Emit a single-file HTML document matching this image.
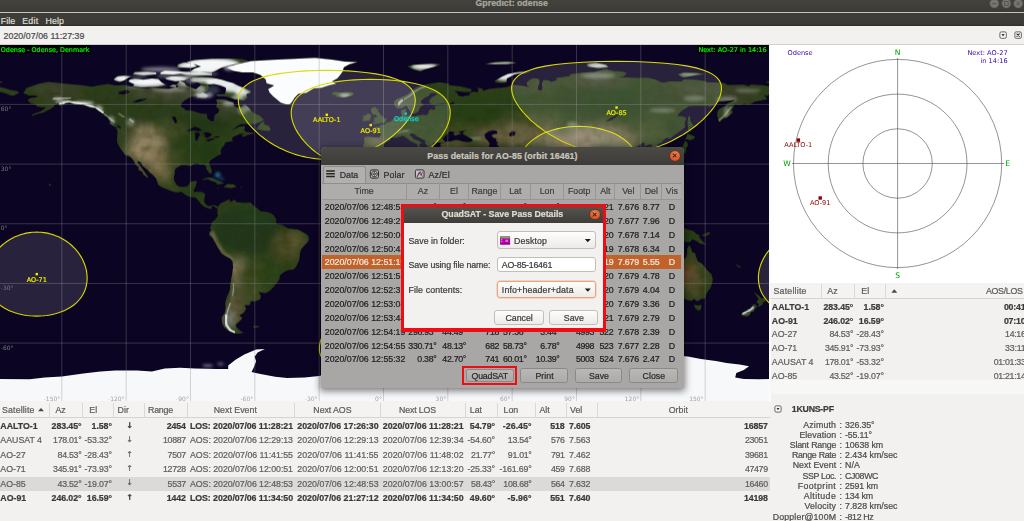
<!DOCTYPE html>
<html lang="en"><head><meta charset="utf-8"><title>Gpredict: odense</title>
<style>
html,body{margin:0;padding:0}
body{width:1024px;height:521px;overflow:hidden;position:relative;background:#f2f1f0;font-family:"Liberation Sans",sans-serif;font-size:8.8px;color:#3c3c3c}
.abs{position:absolute}
.t{position:absolute;white-space:pre;line-height:12px;height:12px;-webkit-text-stroke:0.22px currentColor}
#titlebar{position:absolute;left:0;top:0;width:1024px;height:12px;background:linear-gradient(#43423d,#3c3b37)}
#titleline{position:absolute;left:0;top:12px;width:1024px;height:1px;background:#c4c3bf}
.wbtn{position:absolute;width:9.2px;height:9.2px;border-radius:50%;background:#77766f;box-shadow:inset 0 0 0 0.7px #5d5c56}
#menubar{position:absolute;left:0;top:13px;width:1024px;height:13px;background:linear-gradient(#3e3d39 0,#3c3b37 85%,#2e2d2a 100%)}
#toolbar{position:absolute;left:0;top:26px;width:1024px;height:18.5px;background:#f2f1f0;border-bottom:0.6px solid #d2d0cc;box-sizing:border-box}
#polarbg{position:absolute;left:770.5px;top:44.5px;width:253.5px;height:238.5px;background:#fff}
#mapedge{position:absolute;left:769px;top:44.5px;width:1.5px;height:357px;background:#fbfbfa}
#rlist_hdr{position:absolute;left:770px;top:283px;width:254px;height:16.3px;background:#f4f3f2;border-bottom:0.8px solid #d6d4d0;box-sizing:border-box}
#rlist_foot{position:absolute;left:770px;top:379.5px;width:254px;height:14px;background:#f7f7f6}
.vsep{position:absolute;width:0.8px;background:#dad8d4}
.vsep2{position:absolute;width:0.8px;background:#979695}
.tri_up{position:absolute;width:0;height:0;border-left:2.7px solid transparent;border-right:2.7px solid transparent;border-bottom:3.2px solid #4c4c4c}
.tri_dn{position:absolute;width:0;height:0;border-left:2.7px solid transparent;border-right:2.7px solid transparent;border-top:3.2px solid #222}
#bt_hdr{position:absolute;left:0;top:401.3px;width:770px;height:17px;background:#f4f3f2;border-bottom:0.8px solid #d6d4d0;box-sizing:border-box}
#bt_sel{position:absolute;left:0;top:476.6px;width:770px;height:14px;background:#dcdad8}
#pw{position:absolute;left:321px;top:147.1px;width:362.6px;height:240.8px;background:#a8a7a6;border-radius:5px 5px 0 0;box-shadow:0 2px 7px 0.5px rgba(0,0,0,0.5)}
#pw_title{position:absolute;left:321px;top:147.1px;width:362.6px;height:17.6px;background:linear-gradient(#4a4944,#3d3c38);border-radius:5px 5px 0 0}
#pw_tab{position:absolute;left:322.5px;top:166px;width:43.5px;height:16.5px;background:#b1b0af;border:0.7px solid #8e8d8c;border-bottom:none;border-radius:2.5px 2.5px 0 0;box-sizing:border-box}
#pw_hdr{position:absolute;left:322.3px;top:182.5px;width:359px;height:17px;background:#aeadac;border-top:0.7px solid #8e8d8c;border-bottom:0.7px solid #979695;box-sizing:border-box}
#pw_sel{position:absolute;left:322.3px;top:255.3px;width:359px;height:13.9px;background:#c0622a}
.closebtn{position:absolute;border-radius:50%;background:radial-gradient(circle at 50% 35%,#f08a60,#d9501e 75%);box-shadow:0 0 0 0.6px #6e2a10}
.closebtn:before,.closebtn:after{content:"";position:absolute;left:50%;top:50%;width:5.4px;height:1px;margin:-0.5px 0 0 -2.7px;background:#4a1c0a;transform:rotate(45deg)}
.closebtn:after{transform:rotate(-45deg)}
.pbtn{position:absolute;background:linear-gradient(#b9b8b7,#acabaa);border:0.8px solid #8a8988;border-radius:2.5px;box-sizing:border-box}
#qs_red{position:absolute;left:462.3px;top:366.3px;width:54.7px;height:18.9px;border:2.9px solid #ee0d12;box-sizing:border-box}
#sd_red{position:absolute;left:400.5px;top:203.8px;width:205.3px;height:127.9px;background:#ee0d12}
#sd_title{position:absolute;left:403.5px;top:206.8px;width:199.3px;height:16px;background:linear-gradient(#55534e,#3e3d39)}
#sd_body{position:absolute;left:403.5px;top:222.8px;width:199.3px;height:105.6px;background:#f2f1f0}
.combo,.sbtn{position:absolute;background:linear-gradient(#fdfdfc,#ecebe9);border:0.9px solid #c2bfb9;border-radius:3px;box-sizing:border-box}
.combo.foc{border-color:#e9a57e;box-shadow:0 0 0 0.4px #f0b696}
.entry{position:absolute;background:#fff;border:0.9px solid #c2bfb9;border-radius:3px;box-sizing:border-box}

svg text{font-family:"DejaVu Sans","Liberation Sans",sans-serif}
</style></head>
<body>
<div id="titlebar"></div>
<span class="t" style="letter-spacing:-0.004px;left:475.50px;top:-2.80px;font-weight:bold;color:#aaa79f">Gpredict: odense</span>
<svg class="abs" style="left:985px;top:0" width="39" height="11" viewBox="985 0 39 11"><circle cx="994.3" cy="3.5" r="4.5" fill="#76756f" stroke="#5a5954" stroke-width="0.6"/><circle cx="1006.3" cy="3.5" r="4.5" fill="#76756f" stroke="#5a5954" stroke-width="0.6"/><circle cx="1018.2" cy="3.5" r="4.5" fill="#76756f" stroke="#5a5954" stroke-width="0.6"/><path d="M992.2 3.7H996.4" stroke="#55544f" stroke-width="1"/><rect x="1004.4" y="1.6" width="3.8" height="3.8" fill="none" stroke="#55544f" stroke-width="0.9"/><path d="M1016.4 1.7L1020 5.3M1020 1.7L1016.4 5.3" stroke="#55544f" stroke-width="1"/></svg>
<div id="titleline"></div>
<div id="menubar"></div>
<span class="t" style="letter-spacing:0.080px;left:0.70px;top:14.80px;color:#dfdbd2">File</span>
<span class="t" style="letter-spacing:0.284px;left:22.20px;top:14.80px;color:#dfdbd2">Edit</span>
<span class="t" style="letter-spacing:0.100px;left:45.60px;top:14.80px;color:#dfdbd2">Help</span>
<div id="toolbar"></div>
<span class="t" style="letter-spacing:0.048px;left:3.50px;top:29.50px;color:#4a4a4a">2020/07/06 11:27:39</span>
<svg class="abs" style="left:999px;top:31px" width="24" height="9" viewBox="0 0 24 9"><rect x="0.9" y="0.9" width="6.4" height="6.4" rx="1.4" fill="#fafafa" stroke="#555" stroke-width="0.9"/><path d="M2.5 3.1 L5.7 3.1 L4.1 5.4 Z" fill="#333"/><rect x="15.9" y="0.9" width="6.4" height="6.4" rx="1.2" fill="#fafafa" stroke="#555" stroke-width="0.9"/><path d="M17.6 2.6 L20.6 5.6 M20.6 2.6 L17.6 5.6" stroke="#222" stroke-width="1.1"/></svg>
<svg class="abs" id="map" style="left:0;top:44.5px" width="769" height="356.8" viewBox="0 44.5 769 356.8">
<defs>
<clipPath id="landclip"><path d="M23.2 92.8 L26.5 87.4 L34.0 85.0 L38.3 83.4 L47.9 81.4 L57.6 82.4 L66.1 83.4 L81.1 84.8 L91.9 86.2 L98.3 85.0 L107.9 83.6 L115.4 85.0 L124.0 84.6 L136.9 87.6 L147.6 88.4 L151.9 87.4 L160.5 88.0 L169.1 88.4 L175.5 87.0 L177.6 83.0 L179.8 80.4 L184.1 82.0 L186.2 85.0 L190.5 86.8 L195.9 89.0 L199.1 86.0 L201.2 84.6 L207.7 85.0 L209.2 87.0 L207.7 90.0 L203.4 91.4 L199.1 92.0 L195.9 95.0 L190.5 96.4 L185.1 99.3 L181.9 102.3 L180.4 105.9 L184.1 108.3 L185.6 109.9 L192.6 110.5 L196.9 112.1 L201.2 113.3 L207.0 113.7 L207.2 117.8 L209.8 120.2 L211.9 121.4 L214.1 120.6 L214.7 114.9 L218.4 112.3 L219.5 108.9 L216.2 105.9 L217.3 102.9 L216.2 99.3 L221.6 99.3 L225.9 99.5 L230.2 101.3 L233.4 101.9 L234.5 105.9 L237.7 107.3 L242.0 106.3 L244.1 103.3 L246.3 104.9 L249.5 107.9 L251.6 110.9 L254.8 113.3 L259.1 114.7 L261.3 116.8 L263.8 119.2 L261.3 121.0 L254.8 123.4 L248.4 123.4 L240.9 123.4 L236.6 126.0 L232.3 129.4 L235.5 128.0 L239.8 126.0 L245.2 125.6 L244.5 128.2 L244.1 129.8 L246.3 131.4 L251.6 132.2 L254.8 131.4 L252.7 133.2 L247.3 134.5 L243.0 136.5 L241.5 135.1 L245.2 133.2 L239.8 133.6 L235.5 135.3 L232.7 136.7 L231.7 138.7 L233.4 139.9 L232.3 140.5 L230.2 140.9 L225.9 141.7 L224.8 142.7 L224.4 144.7 L222.2 146.7 L220.5 149.7 L220.5 151.6 L221.4 153.0 L218.8 154.4 L216.2 155.8 L213.4 157.6 L209.8 160.0 L208.9 163.0 L210.7 166.8 L211.7 169.9 L211.3 172.9 L209.4 173.1 L207.7 170.5 L206.2 168.0 L205.9 165.4 L203.4 163.6 L200.4 164.2 L198.0 162.8 L194.4 163.0 L191.8 165.2 L189.4 165.2 L186.2 164.4 L181.9 164.4 L178.7 166.0 L175.1 168.6 L174.8 171.9 L173.8 176.5 L174.2 180.5 L176.8 184.9 L179.8 186.5 L183.0 186.7 L186.6 186.3 L189.2 183.9 L189.9 181.5 L193.7 180.5 L196.9 180.5 L195.9 184.5 L195.2 187.1 L194.1 188.4 L193.1 191.6 L195.9 191.8 L199.1 191.6 L202.3 191.8 L205.1 193.4 L204.4 197.4 L204.0 201.4 L205.5 203.4 L207.2 205.2 L209.8 205.7 L211.9 205.0 L214.1 204.4 L216.7 205.7 L217.7 206.3 L217.1 208.3 L215.6 206.9 L213.2 205.3 L211.3 206.7 L211.3 208.5 L208.7 208.1 L205.9 206.9 L204.2 206.1 L201.2 203.8 L199.5 201.4 L196.9 198.2 L195.2 196.8 L191.6 196.4 L187.7 195.4 L184.5 193.4 L181.5 191.0 L178.1 191.8 L174.4 191.6 L170.1 190.0 L165.8 188.2 L161.6 186.5 L158.3 184.3 L157.3 181.5 L156.2 177.9 L153.0 174.5 L149.8 171.9 L148.0 169.5 L145.5 167.6 L142.7 165.6 L141.2 162.0 L137.8 160.2 L137.5 162.6 L140.8 166.2 L143.3 169.9 L145.9 173.5 L148.5 177.1 L147.0 177.1 L143.3 173.9 L142.3 171.1 L138.4 169.2 L138.6 166.6 L135.4 164.0 L133.7 160.6 L132.2 158.2 L129.6 155.8 L125.1 154.6 L123.0 151.6 L121.2 149.3 L119.7 146.7 L117.6 143.3 L117.0 139.7 L117.2 135.7 L117.6 131.4 L116.1 127.2 L119.7 127.4 L121.0 129.0 L120.6 126.2 L119.3 125.2 L115.9 123.8 L111.2 122.2 L109.4 119.8 L107.3 116.8 L104.1 114.9 L101.5 112.3 L98.3 109.9 L95.1 107.3 L90.8 107.3 L87.6 105.9 L83.7 104.3 L79.0 103.9 L74.7 103.7 L69.8 102.1 L65.5 102.5 L64.0 103.9 L59.7 105.1 L58.2 102.7 L61.8 101.5 L57.6 102.3 L54.3 104.9 L52.8 106.9 L50.0 108.5 L46.8 110.3 L43.6 111.9 L39.3 112.9 L34.0 114.5 L30.7 114.9 L35.0 112.7 L39.3 111.5 L43.6 108.9 L46.2 106.5 L42.5 106.7 L37.2 105.9 L35.7 103.9 L30.7 102.9 L28.6 100.7 L27.5 99.3 L30.3 97.8 L36.1 97.0 L38.3 95.2 L34.0 94.8 L28.6 95.0 L25.4 93.6Z M192.6 76.9 L201.2 76.5 L209.8 76.9 L216.2 78.1 L221.6 79.3 L227.0 81.0 L233.4 82.8 L238.8 85.4 L246.3 88.4 L251.0 90.4 L250.5 92.4 L246.3 93.6 L247.3 97.2 L244.1 99.9 L239.8 99.5 L234.5 98.7 L229.1 96.8 L223.7 95.2 L217.3 95.4 L216.2 94.0 L224.8 93.4 L225.9 90.0 L225.9 87.0 L219.5 84.8 L214.1 83.6 L207.7 84.2 L201.2 83.8 L198.0 82.0 L191.6 81.4 L190.5 79.1Z M132.6 86.0 L141.2 87.0 L151.9 86.6 L158.3 86.0 L165.8 84.4 L161.6 82.0 L158.3 78.5 L151.9 78.1 L143.3 79.3 L134.7 78.1 L130.0 79.3 L128.3 81.0 L134.7 84.0Z M114.4 80.0 L119.7 81.6 L124.0 80.0 L128.3 76.9 L131.5 75.7 L124.0 75.1 L117.6 75.7 L113.9 78.5Z M190.5 71.1 L201.2 71.5 L211.9 71.7 L216.2 70.1 L220.5 67.5 L227.0 65.3 L237.7 62.9 L248.4 60.2 L242.0 58.4 L229.1 58.0 L211.9 58.2 L194.8 59.6 L186.2 61.6 L194.8 63.7 L201.2 66.1 L194.8 68.1Z M186.2 74.5 L199.1 75.1 L211.9 74.9 L211.9 72.7 L199.1 71.5 L186.2 71.5 L177.6 70.5 L179.8 73.1Z M177.6 67.1 L190.5 67.5 L196.9 65.7 L192.6 63.1 L184.1 61.8 L177.6 64.1Z M132.6 73.7 L143.3 75.1 L156.2 74.1 L156.2 72.1 L147.6 71.1 L134.7 71.5Z M166.9 79.1 L175.5 81.0 L184.1 80.0 L190.5 76.5 L179.8 75.9 L171.2 76.1 L164.8 77.5Z M160.5 73.7 L173.3 74.1 L181.9 72.9 L177.6 70.5 L164.8 70.1 L160.5 72.1Z M169.1 86.0 L177.6 87.0 L178.7 85.0 L173.3 84.0Z M196.9 93.0 L203.4 92.0 L208.7 95.4 L205.5 97.4 L196.9 97.0Z M256.3 128.6 L263.4 130.0 L269.8 130.4 L270.5 128.4 L268.8 125.2 L263.8 123.8 L264.5 120.6 L260.6 122.8 L258.1 126.2Z M108.4 122.2 L115.0 123.2 L118.7 126.8 L114.4 126.2Z M201.2 179.9 L205.5 177.5 L209.8 177.1 L214.1 178.3 L218.4 180.1 L224.4 183.1 L216.9 183.9 L216.2 182.1 L210.9 179.9 L207.7 178.7 L204.4 179.3Z M223.7 186.7 L227.0 183.5 L233.4 183.7 L236.8 186.3 L231.2 187.8Z M215.4 186.7 L220.1 187.3 L218.4 187.8Z M239.4 186.5 L242.8 186.7 L240.9 187.6Z M227.0 67.1 L237.7 63.5 L250.5 60.6 L272.0 59.2 L293.4 58.2 L314.9 57.2 L332.0 59.0 L344.9 61.0 L357.8 61.6 L349.2 64.1 L343.8 67.1 L342.8 71.1 L340.6 74.1 L337.4 78.1 L332.0 81.0 L336.3 83.2 L328.8 85.0 L321.3 87.4 L313.8 88.0 L306.3 92.4 L298.2 93.6 L294.5 97.6 L291.7 101.9 L289.6 104.1 L285.9 103.9 L280.6 102.3 L277.4 99.5 L273.1 96.0 L269.4 92.0 L268.1 88.4 L274.1 85.0 L266.6 83.0 L265.6 79.1 L260.2 74.5 L252.7 72.1 L242.0 72.1 L233.4 70.5Z M331.4 93.0 L335.3 91.2 L340.6 92.0 L347.0 91.4 L352.4 91.8 L354.3 94.0 L350.3 95.6 L343.8 97.2 L338.5 96.4 L335.0 96.2 L336.3 94.8 L332.5 94.2Z M217.7 206.3 L221.0 202.4 L223.7 201.4 L228.0 199.6 L230.2 198.8 L229.5 201.8 L232.7 200.4 L233.8 199.0 L237.0 201.8 L242.0 202.2 L245.6 202.4 L250.5 202.0 L253.8 205.7 L257.0 207.7 L260.8 211.3 L265.6 211.5 L270.9 212.9 L273.7 214.9 L276.3 219.7 L275.6 222.9 L279.5 224.4 L281.6 224.6 L288.1 228.2 L293.4 228.8 L297.7 229.0 L302.0 231.2 L305.9 233.4 L308.2 235.2 L308.9 239.2 L307.4 242.1 L304.2 245.1 L300.9 249.1 L299.9 253.1 L299.4 258.7 L297.7 263.0 L295.6 267.0 L293.4 269.0 L288.1 269.4 L283.8 271.4 L279.9 274.6 L279.1 279.3 L276.3 282.9 L273.1 286.9 L269.2 290.7 L265.6 292.5 L261.3 291.9 L258.3 291.1 L260.8 295.4 L260.0 298.8 L255.9 300.4 L250.5 300.8 L249.9 304.4 L244.1 304.8 L246.3 308.0 L243.5 312.4 L239.0 314.7 L242.4 317.7 L238.8 321.3 L235.5 324.3 L236.8 327.5 L240.9 330.7 L243.7 332.2 L238.8 333.4 L233.4 332.6 L229.1 330.7 L224.4 327.1 L222.0 322.7 L221.6 316.7 L224.8 312.8 L225.7 307.8 L225.2 302.8 L226.3 297.8 L228.0 293.9 L230.0 288.9 L230.2 283.9 L231.2 278.9 L232.3 273.0 L233.0 267.0 L232.7 261.0 L230.6 258.3 L225.9 255.7 L221.6 253.1 L219.7 250.1 L217.3 246.1 L214.7 241.2 L212.4 237.2 L209.4 234.8 L209.2 231.8 L211.5 229.8 L210.0 227.6 L211.5 223.8 L211.9 221.7 L214.5 220.1 L216.2 218.1 L218.0 215.5 L217.3 212.1 L217.5 209.3Z M252.7 325.7 L259.1 325.5 L258.1 327.1 L253.1 327.1Z M371.7 151.6 L364.2 149.7 L363.1 146.3 L364.6 141.3 L363.8 137.5 L366.3 136.3 L371.7 136.7 L376.0 136.9 L379.6 136.9 L380.9 134.5 L380.9 131.8 L378.6 129.4 L373.4 127.4 L377.1 126.2 L380.1 126.6 L379.6 124.4 L383.9 124.8 L386.9 122.2 L391.0 121.0 L393.6 117.8 L398.5 116.6 L402.2 116.0 L401.3 112.9 L401.1 109.9 L404.5 108.9 L406.2 108.5 L405.6 111.1 L404.9 113.5 L406.7 115.8 L410.3 115.1 L414.0 116.0 L418.9 114.9 L423.2 114.5 L426.0 115.1 L428.5 113.3 L428.7 110.3 L431.7 108.5 L433.9 109.9 L435.8 107.5 L433.9 105.5 L439.3 104.7 L443.5 104.7 L447.8 103.9 L444.6 102.7 L437.1 103.5 L432.6 104.1 L429.2 102.5 L429.6 98.9 L431.7 97.0 L437.1 94.0 L435.0 92.4 L430.7 92.8 L429.0 95.2 L424.2 97.6 L421.2 99.9 L420.4 102.3 L423.8 104.3 L420.0 106.5 L418.9 109.9 L417.4 111.7 L414.0 113.1 L410.9 112.9 L410.7 110.9 L408.8 108.7 L407.5 106.3 L406.2 104.7 L403.9 106.3 L400.7 107.7 L397.4 107.7 L395.3 106.1 L394.2 103.5 L394.2 100.9 L396.4 98.9 L401.7 97.0 L406.0 95.0 L409.9 92.4 L411.8 90.0 L415.7 87.6 L420.0 85.6 L425.3 84.0 L431.7 83.0 L438.6 81.8 L444.6 82.4 L450.0 83.6 L447.8 84.6 L454.3 85.2 L460.7 86.0 L467.1 87.6 L471.4 88.8 L471.4 91.0 L466.1 91.8 L458.6 90.8 L454.3 90.4 L457.5 93.0 L458.1 95.2 L462.8 96.2 L465.0 95.4 L469.9 94.8 L469.3 92.6 L473.6 91.2 L477.9 91.8 L478.3 89.4 L477.2 87.2 L482.1 88.0 L483.2 90.2 L488.6 88.4 L497.2 87.4 L500.4 87.4 L507.9 86.4 L513.2 84.4 L521.8 85.4 L527.2 86.4 L531.0 87.4 L527.2 85.0 L526.7 82.0 L530.4 78.9 L533.6 77.7 L539.0 78.5 L539.6 82.0 L537.9 86.0 L537.9 89.4 L541.1 90.4 L542.8 88.0 L541.8 84.0 L543.3 79.5 L548.6 80.0 L551.2 81.4 L556.1 80.0 L556.8 77.3 L563.6 76.5 L570.1 75.5 L570.1 73.7 L576.5 72.9 L582.9 72.1 L593.7 71.5 L600.1 70.1 L606.5 68.7 L613.0 70.5 L621.5 71.1 L626.9 72.5 L623.7 75.7 L617.2 76.7 L625.8 76.9 L636.5 77.5 L647.3 77.3 L655.8 79.1 L660.1 81.6 L664.4 82.2 L668.7 81.0 L675.1 81.0 L681.6 81.0 L683.7 79.1 L690.1 79.1 L696.6 79.5 L704.1 80.4 L707.3 82.0 L715.9 82.0 L724.5 82.8 L727.7 84.8 L735.2 84.6 L743.8 84.2 L749.1 86.0 L750.2 84.0 L756.6 84.4 L763.1 84.8 L769.5 86.0 L769.5 94.0 L766.9 95.2 L764.1 94.6 L767.3 98.7 L760.9 99.9 L755.6 100.7 L749.1 103.9 L743.8 103.3 L739.5 104.3 L734.1 104.1 L733.0 107.9 L730.9 108.9 L733.0 111.5 L730.5 113.9 L726.6 117.0 L723.4 118.0 L719.5 121.8 L718.0 118.8 L717.0 112.9 L718.0 109.9 L720.2 107.9 L724.5 105.9 L727.7 102.9 L733.0 100.9 L735.2 98.9 L730.9 99.9 L726.6 100.3 L719.1 100.9 L714.8 104.3 L709.4 105.9 L706.2 104.9 L700.9 105.3 L694.4 105.3 L689.1 105.5 L683.7 108.9 L680.5 111.3 L678.4 113.9 L677.3 115.8 L682.6 115.8 L686.5 117.8 L684.8 121.8 L684.8 126.8 L680.5 130.2 L675.1 133.7 L670.4 137.7 L666.6 137.3 L663.8 139.1 L661.6 141.7 L656.9 144.1 L661.0 149.7 L661.0 152.6 L655.8 154.2 L654.6 150.7 L655.0 148.3 L651.5 147.7 L652.0 144.5 L650.0 143.7 L644.0 145.7 L645.1 142.7 L643.0 142.1 L638.7 145.3 L635.9 146.3 L638.7 149.1 L643.0 148.3 L646.2 149.7 L641.9 151.6 L639.3 153.6 L642.5 158.2 L644.7 161.0 L645.1 163.6 L644.0 167.0 L640.2 171.5 L636.5 174.5 L633.3 177.5 L628.0 178.9 L621.5 180.7 L619.8 182.9 L618.3 180.5 L615.1 180.3 L612.3 182.9 L610.4 185.5 L613.0 189.4 L616.8 192.4 L617.9 197.4 L617.2 200.4 L613.0 202.6 L608.7 205.9 L608.2 203.4 L604.4 201.4 L603.3 199.0 L600.1 197.8 L599.0 196.4 L597.9 199.4 L596.4 202.4 L597.9 205.3 L599.0 209.3 L601.2 209.7 L604.4 212.3 L605.4 215.3 L606.9 220.5 L605.2 220.1 L600.7 217.5 L598.8 212.3 L597.1 209.3 L594.3 207.3 L594.9 203.4 L595.2 199.4 L593.7 195.4 L592.8 190.4 L589.4 190.0 L586.1 191.4 L585.9 187.4 L584.0 183.9 L580.8 180.5 L579.7 178.1 L577.6 179.5 L573.9 180.3 L570.1 180.9 L569.0 183.5 L565.8 184.9 L560.0 190.0 L555.5 192.4 L555.7 197.0 L554.6 202.8 L552.9 205.0 L551.2 205.5 L549.7 207.1 L547.1 204.4 L545.4 200.4 L543.9 197.4 L541.1 191.4 L539.6 185.5 L539.4 181.5 L539.0 179.1 L534.7 181.9 L531.5 179.1 L533.6 177.5 L529.7 176.1 L527.2 173.9 L520.7 172.9 L515.4 173.3 L507.9 172.3 L505.7 169.9 L504.2 169.4 L500.4 170.3 L496.1 168.6 L492.4 165.6 L490.7 163.2 L488.1 163.0 L486.4 164.4 L488.1 167.6 L491.1 170.5 L492.4 173.5 L494.2 171.7 L493.9 174.7 L499.3 175.3 L504.0 171.3 L504.7 174.5 L509.2 176.3 L511.7 178.5 L508.9 182.7 L507.4 185.5 L502.5 188.2 L495.4 191.4 L488.6 194.8 L480.4 197.6 L476.8 198.0 L475.3 193.8 L474.6 190.4 L470.8 184.5 L467.1 180.5 L463.5 174.5 L459.0 167.6 L458.3 164.6 L457.1 161.0 L458.6 157.6 L460.7 152.6 L460.7 150.1 L454.3 151.3 L448.9 150.7 L443.5 150.3 L442.0 148.7 L440.3 146.7 L441.0 144.7 L439.7 143.3 L441.4 142.7 L445.7 141.7 L445.7 141.3 L451.0 141.1 L454.3 139.7 L458.6 139.7 L462.8 141.3 L468.2 141.7 L472.5 140.7 L472.5 138.7 L468.6 136.7 L466.1 135.1 L462.8 133.4 L463.9 130.8 L467.6 129.4 L465.0 129.6 L458.6 131.2 L458.6 132.2 L461.8 133.0 L459.4 133.7 L455.3 134.9 L453.2 133.2 L455.3 131.8 L452.1 130.8 L449.3 130.8 L447.2 133.4 L444.8 135.7 L442.9 137.7 L443.5 139.7 L445.5 141.3 L442.5 141.9 L439.3 142.1 L435.0 142.1 L432.6 142.7 L433.9 144.7 L432.8 146.5 L435.0 147.7 L432.8 148.7 L432.4 150.7 L430.0 149.7 L428.5 147.1 L426.4 144.3 L425.1 142.9 L425.1 140.1 L423.2 138.9 L418.9 136.7 L416.1 135.3 L414.6 133.2 L412.7 133.7 L412.9 132.6 L409.9 133.2 L409.9 135.3 L412.4 136.5 L413.5 138.7 L417.8 139.9 L423.2 143.5 L420.0 142.7 L418.9 144.1 L420.0 145.9 L417.8 147.7 L417.2 147.5 L417.8 145.7 L417.2 143.7 L413.5 142.1 L409.9 140.3 L405.6 136.7 L402.4 134.9 L399.6 136.3 L394.2 137.1 L389.9 137.1 L390.4 138.9 L385.6 141.7 L382.9 144.7 L383.9 146.3 L382.0 148.1 L379.2 150.1 L373.9 150.3Z M371.1 152.0 L379.2 153.4 L389.9 150.1 L404.9 149.3 L407.1 153.6 L405.4 156.0 L415.7 159.0 L426.4 162.0 L430.7 158.0 L437.1 160.0 L445.7 161.8 L452.8 161.2 L456.8 161.2 L453.4 163.8 L459.6 175.5 L463.3 181.5 L463.9 186.5 L468.2 192.8 L475.7 199.4 L476.8 200.8 L484.3 201.0 L493.3 199.8 L492.4 204.4 L486.4 213.3 L477.9 220.9 L472.5 226.8 L467.8 233.2 L468.2 239.2 L470.3 245.1 L470.6 253.1 L465.0 258.1 L458.6 263.0 L459.6 271.0 L453.8 275.0 L453.2 280.9 L447.8 285.5 L441.4 290.5 L430.7 291.5 L423.0 291.5 L421.0 284.9 L415.7 276.0 L414.6 267.0 L408.8 258.1 L412.4 247.1 L411.4 240.2 L409.2 234.2 L402.8 225.2 L403.9 217.3 L401.7 214.3 L394.2 211.3 L385.6 211.7 L378.1 213.3 L372.8 213.3 L367.0 214.5 L359.9 209.7 L355.0 205.3 L351.3 201.4 L347.5 197.4 L346.0 194.0 L348.5 189.4 L348.5 183.5 L347.0 180.5 L351.8 174.5 L355.6 168.6 L362.1 164.6 L362.7 160.6 L366.3 156.6 L369.6 154.6Z M489.2 247.1 L491.8 254.1 L488.6 261.0 L484.7 272.6 L480.0 274.0 L476.8 268.0 L478.5 262.0 L477.9 257.1 L483.2 254.1 L486.4 250.1Z M371.3 123.8 L376.0 123.2 L380.3 122.4 L386.5 121.4 L385.2 120.6 L387.1 118.4 L384.1 117.8 L383.9 116.6 L380.9 114.7 L380.1 112.9 L378.8 111.9 L377.5 110.9 L379.2 108.7 L375.4 108.5 L376.9 106.7 L372.8 106.7 L370.6 108.9 L371.7 111.9 L372.8 113.9 L376.0 114.3 L377.1 116.8 L373.9 117.4 L374.3 119.8 L372.3 120.2 L376.6 121.0 L373.9 121.8Z M362.1 120.6 L366.3 120.4 L370.0 119.4 L370.6 117.2 L371.5 114.7 L369.6 113.5 L367.4 113.3 L365.3 114.9 L362.1 115.5 L363.8 117.4 L362.5 119.2Z M493.9 81.0 L497.2 79.1 L502.5 76.1 L507.9 73.5 L518.6 71.5 L530.4 70.3 L529.3 71.7 L514.3 74.1 L506.8 78.1 L506.4 82.0 L501.4 82.6 L497.2 82.2Z M407.1 66.1 L412.4 68.5 L420.0 70.9 L424.2 69.1 L429.6 67.5 L435.0 66.1 L441.4 63.7 L432.8 63.1 L422.1 63.7 L413.5 64.3Z M484.3 63.5 L495.0 64.1 L507.9 63.7 L516.5 62.3 L507.9 61.0 L495.0 61.8Z M587.2 66.1 L597.9 67.7 L608.7 67.1 L606.5 64.5 L595.8 62.1 L587.2 63.1Z M677.3 74.1 L683.7 76.9 L696.6 74.5 L705.2 73.7 L696.6 72.5 L683.7 72.1Z M765.8 81.8 L769.5 82.4 L769.5 81.0 L767.3 80.8Z M-2.5 82.4 L2.9 82.0 L1.8 81.0 L-2.5 81.0Z M-2.5 86.0 L3.9 87.6 L10.4 89.6 L16.8 90.4 L19.6 92.0 L16.8 93.4 L13.6 95.2 L9.3 94.6 L6.1 93.0 L0.7 91.6 L-2.5 92.4Z M687.6 131.8 L691.2 130.2 L689.5 127.8 L693.4 125.4 L690.1 119.8 L690.1 115.3 L688.0 116.8 L687.6 121.8 L688.0 127.8Z M683.7 140.7 L685.9 137.7 L687.4 133.0 L695.1 136.3 L694.4 137.7 L690.8 139.7 L685.9 138.7Z M664.2 155.6 L667.6 152.6 L675.1 151.6 L677.3 149.1 L680.5 149.1 L683.7 144.1 L684.4 141.3 L686.9 141.1 L688.0 144.7 L685.9 147.7 L685.9 150.7 L685.4 152.6 L683.3 153.6 L680.9 154.2 L677.3 154.4 L676.9 155.0 L674.7 156.6 L673.0 154.4 L668.7 155.0 L664.4 155.8Z M661.6 157.2 L664.4 155.6 L666.6 157.6 L665.1 160.8 L662.7 161.2Z M641.3 177.5 L643.0 173.1 L645.1 173.5 L643.0 179.5Z M554.6 204.4 L557.6 206.3 L558.9 209.3 L556.1 211.3 L554.6 208.3Z M587.9 212.1 L593.7 215.3 L599.0 219.3 L605.4 223.2 L607.6 227.2 L610.8 229.8 L610.4 234.8 L606.5 234.2 L601.2 229.2 L596.9 224.2 L592.6 219.3 L588.3 214.3Z M609.3 236.8 L615.1 236.2 L621.5 236.6 L629.0 238.2 L629.0 240.4 L621.5 239.8 L615.1 238.8 L609.7 237.6Z M617.2 220.3 L621.5 220.1 L625.8 216.9 L630.1 213.3 L634.4 209.3 L638.7 212.9 L636.1 216.3 L638.3 221.3 L635.5 224.8 L632.9 230.2 L629.0 231.2 L623.7 229.8 L620.0 228.8 L617.7 224.2Z M639.8 222.3 L641.9 220.9 L649.4 220.9 L651.5 220.3 L647.3 222.5 L641.9 222.9 L643.0 225.2 L647.9 225.2 L645.1 227.2 L647.3 232.2 L645.1 233.2 L643.0 229.2 L641.5 234.2 L639.8 233.8 L638.7 229.2 L639.8 225.2Z M641.5 191.4 L642.5 186.5 L645.5 186.9 L645.8 190.4 L644.0 194.8 L649.4 197.8 L646.2 196.4 L643.0 195.8 L641.3 193.8Z M645.1 209.3 L648.3 206.3 L652.6 204.0 L654.8 207.3 L653.7 210.7 L650.5 211.3 L648.3 208.3Z M664.4 224.8 L670.8 224.8 L673.0 229.8 L678.4 226.4 L681.6 227.2 L685.9 228.4 L690.1 230.0 L693.4 230.8 L696.6 233.8 L700.2 235.2 L698.7 236.8 L701.3 239.6 L704.1 242.3 L706.7 243.7 L703.0 243.7 L699.8 243.1 L696.6 240.4 L692.3 238.6 L690.1 241.5 L685.9 241.3 L681.6 239.4 L679.4 240.0 L680.9 237.2 L679.4 234.2 L674.1 232.0 L668.7 231.2 L668.3 228.8Z M701.5 234.4 L705.2 233.4 L708.4 231.6 L710.1 231.8 L709.4 233.8 L706.2 235.6 L703.0 235.6Z M626.9 267.0 L628.4 275.0 L626.9 276.0 L630.1 283.9 L631.6 286.9 L630.1 291.5 L636.5 292.9 L640.8 290.7 L648.3 290.7 L653.7 287.5 L660.1 286.3 L664.8 285.9 L670.8 288.3 L674.1 292.5 L675.1 290.9 L678.8 288.1 L678.4 293.3 L679.9 291.5 L680.5 294.1 L682.6 294.5 L683.7 297.8 L686.9 299.6 L691.2 300.4 L694.0 298.6 L697.2 301.0 L700.9 298.4 L705.2 297.8 L706.2 293.3 L707.9 290.5 L710.5 287.3 L712.0 282.9 L712.9 279.5 L711.8 275.0 L711.2 273.4 L708.4 271.0 L706.9 269.4 L703.7 265.6 L701.9 263.2 L697.7 261.0 L696.6 258.1 L695.5 255.1 L695.1 252.7 L691.9 251.5 L691.2 248.3 L689.3 244.5 L687.1 248.5 L686.9 254.1 L685.4 258.1 L682.6 258.3 L678.4 255.1 L674.1 253.1 L675.1 249.7 L676.9 247.5 L673.0 247.3 L667.6 245.7 L664.4 247.7 L661.8 252.9 L658.4 252.9 L655.4 251.1 L651.5 253.7 L648.3 257.7 L645.5 259.1 L643.0 262.4 L637.6 263.8 L632.3 264.8Z M693.8 304.2 L697.7 305.0 L701.5 304.6 L700.9 309.2 L697.7 310.0 L695.1 307.4Z M753.8 291.7 L757.3 293.9 L759.8 296.0 L760.9 298.0 L765.2 298.0 L766.3 298.2 L765.0 301.2 L763.1 301.6 L762.8 303.4 L759.4 306.0 L758.3 305.4 L759.0 303.4 L756.2 301.6 L758.1 299.8 L758.1 297.2 L754.5 292.9Z M753.8 303.8 L757.3 305.6 L754.5 308.8 L754.1 310.6 L750.8 311.4 L749.5 314.5 L747.0 315.9 L742.7 315.3 L740.5 314.3 L744.2 311.0 L749.8 308.4 L752.1 305.4Z M735.2 263.4 L739.5 265.4 L741.6 267.6 L738.4 266.4Z M49.0 183.1 L51.3 184.3 L49.8 185.7 L49.0 184.3Z"/></clipPath>
<filter id="bl4" x="-30%" y="-30%" width="160%" height="160%"><feGaussianBlur stdDeviation="4"/></filter>
<filter id="bl2" x="-30%" y="-30%" width="160%" height="160%"><feGaussianBlur stdDeviation="1.6"/></filter>
<filter id="bl1" x="-5%" y="-5%" width="110%" height="110%"><feGaussianBlur stdDeviation="0.55"/></filter>
<filter id="bl05" x="-5%" y="-5%" width="110%" height="110%"><feGaussianBlur stdDeviation="0.35"/></filter>
<filter id="noise" x="0" y="0" width="100%" height="100%"><feTurbulence type="fractalNoise" baseFrequency="0.11 0.13" numOctaves="3" seed="7" result="n"/><feColorMatrix in="n" type="matrix" values="0 0 0 0 0.02  0 0 0 0 0.03  0 0 0 0 0.0  0.9 0.9 0 0 -0.72"/></filter>
<clipPath id="mapclip"><rect x="0" y="44.5" width="770" height="357.5"/></clipPath>
</defs>
<rect x="0" y="44.5" width="770" height="357.5" fill="#0c0423"/>
<g filter="url(#bl1)"><g clip-path="url(#landclip)">
<rect x="-5" y="40" width="780" height="365" fill="#2e421d"/>
<g filter="url(#bl4)">
<ellipse cx="61.8" cy="96.0" rx="30.0" ry="9.9" fill="#363e23" opacity="0.90"/>
<ellipse cx="55.4" cy="87.0" rx="25.7" ry="4.4" fill="#444633" opacity="0.90"/>
<ellipse cx="115.4" cy="99.9" rx="34.3" ry="11.9" fill="#2d3c1c" opacity="0.90"/>
<ellipse cx="158.3" cy="103.9" rx="34.3" ry="13.9" fill="#2c3d1d" opacity="0.90"/>
<ellipse cx="179.8" cy="92.0" rx="30.0" ry="8.0" fill="#4f4e41" opacity="0.80"/>
<ellipse cx="147.6" cy="92.0" rx="25.7" ry="6.0" fill="#4b4b3a" opacity="0.80"/>
<ellipse cx="222.7" cy="109.9" rx="17.2" ry="9.9" fill="#364127" opacity="0.90"/>
<ellipse cx="229.1" cy="103.9" rx="10.7" ry="5.0" fill="#5a5a4e" opacity="0.70"/>
<ellipse cx="201.2" cy="123.8" rx="30.0" ry="9.9" fill="#223617" opacity="0.95"/>
<ellipse cx="136.9" cy="117.8" rx="25.7" ry="9.9" fill="#2c3e1c" opacity="0.90"/>
<ellipse cx="169.1" cy="131.8" rx="19.3" ry="11.9" fill="#424e27" opacity="0.90"/>
<ellipse cx="145.5" cy="141.7" rx="19.3" ry="15.9" fill="#8f8262" opacity="0.97"/>
<ellipse cx="151.9" cy="155.6" rx="15.0" ry="9.9" fill="#93805e" opacity="0.97"/>
<ellipse cx="134.7" cy="151.6" rx="8.6" ry="7.0" fill="#9a8866" opacity="0.95"/>
<ellipse cx="126.2" cy="135.7" rx="8.6" ry="9.9" fill="#384226" opacity="0.80"/>
<ellipse cx="160.5" cy="168.6" rx="10.7" ry="9.9" fill="#84744f" opacity="0.95"/>
<ellipse cx="147.6" cy="165.6" rx="5.4" ry="6.0" fill="#716247" opacity="0.90"/>
<ellipse cx="141.2" cy="168.6" rx="4.7" ry="8.0" fill="#695b41" opacity="0.90"/>
<ellipse cx="194.8" cy="147.7" rx="25.7" ry="15.9" fill="#273e16" opacity="0.90"/>
<ellipse cx="211.9" cy="153.6" rx="12.9" ry="11.9" fill="#223a14" opacity="0.90"/>
<ellipse cx="173.3" cy="157.6" rx="10.7" ry="9.9" fill="#434e27" opacity="0.80"/>
<ellipse cx="169.1" cy="183.5" rx="12.9" ry="6.0" fill="#424a26" opacity="0.90"/>
<ellipse cx="190.5" cy="191.4" rx="12.9" ry="6.0" fill="#223a16" opacity="0.90"/>
<ellipse cx="250.5" cy="229.2" rx="38.6" ry="23.9" fill="#20391a" opacity="1.00"/>
<ellipse cx="254.8" cy="215.3" rx="17.2" ry="8.0" fill="#233d1b" opacity="0.95"/>
<ellipse cx="287.0" cy="245.1" rx="15.0" ry="15.9" fill="#4d4c29" opacity="0.95"/>
<ellipse cx="296.7" cy="239.2" rx="7.5" ry="9.0" fill="#5f5a34" opacity="0.90"/>
<ellipse cx="272.0" cy="271.0" rx="12.9" ry="11.9" fill="#2c4219" opacity="0.90"/>
<ellipse cx="250.5" cy="271.0" rx="12.9" ry="11.9" fill="#3c4820" opacity="0.90"/>
<ellipse cx="250.5" cy="292.9" rx="12.9" ry="9.9" fill="#464f27" opacity="0.90"/>
<ellipse cx="235.5" cy="310.8" rx="8.6" ry="15.9" fill="#665a3f" opacity="0.95"/>
<ellipse cx="234.9" cy="277.0" rx="3.9" ry="13.9" fill="#8d7d5c" opacity="0.95"/>
<ellipse cx="238.8" cy="263.0" rx="4.3" ry="7.0" fill="#94866a" opacity="0.90"/>
<ellipse cx="228.0" cy="318.7" rx="3.2" ry="9.9" fill="#999c9e" opacity="0.90"/>
<ellipse cx="404.9" cy="99.9" rx="17.2" ry="11.9" fill="#36422a" opacity="0.90"/>
<ellipse cx="383.5" cy="131.8" rx="17.2" ry="9.9" fill="#2e421d" opacity="0.90"/>
<ellipse cx="374.9" cy="143.7" rx="10.7" ry="7.0" fill="#5a5535" opacity="0.90"/>
<ellipse cx="426.4" cy="123.8" rx="30.0" ry="11.9" fill="#2d421c" opacity="0.90"/>
<ellipse cx="469.3" cy="111.9" rx="34.3" ry="15.9" fill="#293f16" opacity="0.95"/>
<ellipse cx="458.6" cy="129.8" rx="17.2" ry="6.0" fill="#444e26" opacity="0.85"/>
<ellipse cx="452.1" cy="144.7" rx="17.2" ry="5.0" fill="#665a3c" opacity="0.90"/>
<ellipse cx="490.7" cy="135.7" rx="17.2" ry="9.9" fill="#685d41" opacity="0.90"/>
<ellipse cx="516.5" cy="133.7" rx="21.4" ry="11.9" fill="#736648" opacity="0.95"/>
<ellipse cx="544.3" cy="135.7" rx="17.2" ry="9.9" fill="#716448" opacity="0.90"/>
<ellipse cx="533.6" cy="119.8" rx="30.0" ry="8.0" fill="#454f29" opacity="0.90"/>
<ellipse cx="544.3" cy="99.9" rx="47.2" ry="13.9" fill="#273e16" opacity="0.95"/>
<ellipse cx="533.6" cy="86.0" rx="25.7" ry="5.0" fill="#42472f" opacity="0.80"/>
<ellipse cx="608.7" cy="99.9" rx="51.5" ry="15.9" fill="#253b16" opacity="0.95"/>
<ellipse cx="597.9" cy="80.0" rx="30.0" ry="6.0" fill="#444836" opacity="0.85"/>
<ellipse cx="673.0" cy="96.0" rx="38.6" ry="11.9" fill="#2d3d1b" opacity="0.95"/>
<ellipse cx="705.2" cy="88.0" rx="34.3" ry="6.0" fill="#3f442d" opacity="0.85"/>
<ellipse cx="737.3" cy="94.0" rx="21.4" ry="8.0" fill="#3e412c" opacity="0.90"/>
<ellipse cx="726.6" cy="111.9" rx="6.4" ry="9.9" fill="#374227" opacity="0.90"/>
<ellipse cx="597.9" cy="133.7" rx="34.3" ry="9.9" fill="#786a4c" opacity="0.97"/>
<ellipse cx="572.2" cy="143.7" rx="25.7" ry="8.0" fill="#827152" opacity="0.97"/>
<ellipse cx="623.7" cy="141.7" rx="17.2" ry="6.0" fill="#736647" opacity="0.90"/>
<ellipse cx="651.5" cy="129.8" rx="17.2" ry="9.9" fill="#3a4a23" opacity="0.90"/>
<ellipse cx="673.0" cy="127.8" rx="8.6" ry="9.9" fill="#263c16" opacity="0.90"/>
<ellipse cx="576.5" cy="159.6" rx="25.7" ry="8.0" fill="#665b42" opacity="0.90"/>
<ellipse cx="630.1" cy="163.6" rx="21.4" ry="15.9" fill="#2d421b" opacity="0.90"/>
<ellipse cx="550.8" cy="179.5" rx="17.2" ry="15.9" fill="#444e27" opacity="0.90"/>
<ellipse cx="486.4" cy="175.5" rx="21.4" ry="15.9" fill="#84714e" opacity="0.97"/>
<ellipse cx="507.9" cy="159.6" rx="17.2" ry="9.9" fill="#766647" opacity="0.95"/>
<ellipse cx="608.7" cy="193.4" rx="12.9" ry="15.9" fill="#263c17" opacity="0.90"/>
<ellipse cx="679.4" cy="151.6" rx="6.4" ry="6.0" fill="#273b16" opacity="0.90"/>
<ellipse cx="404.9" cy="177.5" rx="55.8" ry="17.9" fill="#8e7a54" opacity="0.98"/>
<ellipse cx="426.4" cy="219.3" rx="30.0" ry="15.9" fill="#223814" opacity="0.95"/>
<ellipse cx="430.7" cy="267.0" rx="17.2" ry="13.9" fill="#665b3b" opacity="0.90"/>
<ellipse cx="458.6" cy="239.2" rx="12.9" ry="19.9" fill="#3a4620" opacity="0.90"/>
<ellipse cx="666.6" cy="273.0" rx="30.0" ry="15.9" fill="#764c2c" opacity="0.97"/>
<ellipse cx="694.4" cy="282.9" rx="10.7" ry="11.9" fill="#5c4f32" opacity="0.90"/>
<ellipse cx="700.9" cy="269.0" rx="7.5" ry="11.9" fill="#414925" opacity="0.90"/>
<ellipse cx="705.2" cy="290.9" rx="5.4" ry="8.0" fill="#2c3e1a" opacity="0.90"/>
<ellipse cx="692.3" cy="253.1" rx="4.3" ry="6.0" fill="#36441f" opacity="0.90"/>
<ellipse cx="688.0" cy="235.2" rx="12.9" ry="6.0" fill="#223814" opacity="0.95"/>
<ellipse cx="752.3" cy="308.8" rx="6.4" ry="6.0" fill="#3a4427" opacity="0.90"/>
<ellipse cx="748.0" cy="310.8" rx="4.3" ry="3.0" fill="#888b88" opacity="0.70"/>
<ellipse cx="759.8" cy="299.8" rx="4.3" ry="5.0" fill="#2e3e1c" opacity="0.90"/>
</g>
<path d="M211.9 232.2 L215.2 239.2 L219.5 247.1 L224.8 254.1 L231.2 258.1 L234.5 263.0 L234.9 271.0" fill="none" stroke="#85775a" stroke-width="3.4" stroke-opacity="0.90" stroke-linecap="round" stroke-linejoin="round" filter="url(#bl2)"/>
<path d="M233.4 288.9 L232.3 296.8 L231.2 302.8" fill="none" stroke="#7a7052" stroke-width="2.4" stroke-opacity="0.60" stroke-linecap="round" stroke-linejoin="round" filter="url(#bl2)"/>
<rect x="0" y="44.5" width="770" height="357.5" filter="url(#noise)" opacity="0.55"/>
<g filter="url(#bl2)">
<ellipse cx="211.9" cy="64.1" rx="27.9" ry="6.4" fill="#f4f6f8" opacity="1.00"/>
<ellipse cx="199.1" cy="72.1" rx="19.3" ry="3.0" fill="#f4f6f8" opacity="0.95"/>
<ellipse cx="220.5" cy="81.4" rx="15.0" ry="5.2" fill="#f4f6f8" opacity="0.95"/>
<ellipse cx="233.4" cy="87.4" rx="11.8" ry="4.4" fill="#f4f6f8" opacity="0.90"/>
<ellipse cx="242.0" cy="92.0" rx="7.5" ry="3.2" fill="#f4f6f8" opacity="0.85"/>
<ellipse cx="237.7" cy="97.0" rx="6.4" ry="2.0" fill="#f4f6f8" opacity="0.60"/>
<ellipse cx="203.4" cy="94.4" rx="6.4" ry="2.8" fill="#f4f6f8" opacity="0.80"/>
<ellipse cx="229.1" cy="102.9" rx="6.4" ry="2.4" fill="#f4f6f8" opacity="0.50"/>
<ellipse cx="220.5" cy="97.4" rx="5.4" ry="1.6" fill="#f4f6f8" opacity="0.40"/>
<ellipse cx="242.0" cy="109.9" rx="4.3" ry="4.0" fill="#f4f6f8" opacity="0.30"/>
<ellipse cx="203.4" cy="79.5" rx="12.9" ry="2.4" fill="#f4f6f8" opacity="0.85"/>
<ellipse cx="147.6" cy="81.4" rx="19.3" ry="4.6" fill="#f4f6f8" opacity="1.00"/>
<ellipse cx="123.0" cy="78.1" rx="9.6" ry="3.4" fill="#f4f6f8" opacity="1.00"/>
<ellipse cx="169.1" cy="72.1" rx="19.3" ry="3.0" fill="#f4f6f8" opacity="1.00"/>
<ellipse cx="145.5" cy="72.9" rx="12.9" ry="2.0" fill="#f4f6f8" opacity="1.00"/>
<ellipse cx="175.5" cy="78.1" rx="10.7" ry="2.6" fill="#f4f6f8" opacity="0.95"/>
<ellipse cx="186.2" cy="65.1" rx="8.6" ry="3.0" fill="#f4f6f8" opacity="0.95"/>
<ellipse cx="143.3" cy="73.1" rx="10.7" ry="1.8" fill="#f4f6f8" opacity="0.90"/>
<ellipse cx="177.6" cy="78.5" rx="10.7" ry="2.8" fill="#f4f6f8" opacity="0.80"/>
<ellipse cx="173.3" cy="85.4" rx="5.4" ry="1.6" fill="#f4f6f8" opacity="0.60"/>
<ellipse cx="184.1" cy="83.4" rx="5.4" ry="2.4" fill="#f4f6f8" opacity="0.60"/>
<ellipse cx="199.1" cy="88.0" rx="6.4" ry="3.0" fill="#f4f6f8" opacity="0.50"/>
<ellipse cx="169.1" cy="89.6" rx="17.2" ry="1.8" fill="#f4f6f8" opacity="0.35"/>
<ellipse cx="136.9" cy="86.4" rx="10.7" ry="1.4" fill="#f4f6f8" opacity="0.30"/>
<ellipse cx="83.3" cy="102.9" rx="10.7" ry="2.0" fill="#f4f6f8" opacity="0.80"/>
<ellipse cx="98.3" cy="108.9" rx="4.3" ry="4.0" fill="#f4f6f8" opacity="0.60"/>
<ellipse cx="61.8" cy="100.9" rx="6.4" ry="1.6" fill="#f4f6f8" opacity="0.60"/>
<ellipse cx="57.6" cy="97.9" rx="4.3" ry="1.2" fill="#f4f6f8" opacity="0.50"/>
<ellipse cx="111.2" cy="119.8" rx="3.2" ry="4.0" fill="#f4f6f8" opacity="0.40"/>
<ellipse cx="248.4" cy="106.9" rx="3.2" ry="3.0" fill="#f4f6f8" opacity="0.40"/>
<ellipse cx="130.5" cy="121.8" rx="4.3" ry="4.0" fill="#f4f6f8" opacity="0.30"/>
<ellipse cx="505.7" cy="76.1" rx="10.7" ry="4.0" fill="#f4f6f8" opacity="0.90"/>
<ellipse cx="516.5" cy="72.1" rx="10.7" ry="1.6" fill="#f4f6f8" opacity="0.90"/>
<ellipse cx="424.2" cy="66.1" rx="12.9" ry="3.0" fill="#f4f6f8" opacity="0.95"/>
<ellipse cx="501.4" cy="62.7" rx="15.0" ry="1.4" fill="#f4f6f8" opacity="0.90"/>
<ellipse cx="597.9" cy="65.1" rx="10.7" ry="2.4" fill="#f4f6f8" opacity="0.90"/>
<ellipse cx="690.1" cy="74.1" rx="10.7" ry="1.6" fill="#f4f6f8" opacity="0.60"/>
<ellipse cx="344.9" cy="94.8" rx="5.4" ry="1.4" fill="#f4f6f8" opacity="0.85"/>
<ellipse cx="597.9" cy="75.1" rx="17.2" ry="3.0" fill="#f4f6f8" opacity="0.30"/>
<ellipse cx="694.4" cy="97.9" rx="10.7" ry="3.0" fill="#f4f6f8" opacity="0.25"/>
<ellipse cx="726.6" cy="98.9" rx="10.7" ry="3.0" fill="#f4f6f8" opacity="0.30"/>
<ellipse cx="726.6" cy="111.9" rx="2.6" ry="6.0" fill="#f4f6f8" opacity="0.35"/>
<ellipse cx="662.3" cy="109.9" rx="12.9" ry="2.4" fill="#f4f6f8" opacity="0.25"/>
<ellipse cx="748.0" cy="90.0" rx="12.9" ry="2.0" fill="#f4f6f8" opacity="0.25"/>
<ellipse cx="404.9" cy="130.6" rx="6.4" ry="1.0" fill="#f4f6f8" opacity="0.25"/>
<ellipse cx="475.7" cy="138.1" rx="6.4" ry="1.0" fill="#f4f6f8" opacity="0.50"/>
<ellipse cx="572.2" cy="123.8" rx="5.4" ry="2.4" fill="#f4f6f8" opacity="0.30"/>
</g>
<path d="M404.5 98.7 L410.3 95.0 L414.6 91.2 L420.0 88.0 L425.3 86.0" fill="none" stroke="#f4f6f8" stroke-width="1.6" stroke-opacity="0.33" stroke-linecap="round" stroke-linejoin="round" stroke-dasharray="3.2 1.3 1.6 0.9" filter="url(#bl05)"/>
<path d="M398.3 104.3 L399.8 101.9 L401.9 99.9" fill="none" stroke="#f4f6f8" stroke-width="2.6" stroke-opacity="0.60" stroke-linecap="round" stroke-linejoin="round" stroke-dasharray="3.2 1.3 1.6 0.9" filter="url(#bl05)"/>
<path d="M57.6 103.5 L68.3 101.5 L76.9 102.7 L85.4 103.9 L91.9 105.9 L98.3 109.3 L102.6 111.9" fill="none" stroke="#f4f6f8" stroke-width="2.6" stroke-opacity="0.80" stroke-linecap="round" stroke-linejoin="round" stroke-dasharray="3.2 1.3 1.6 0.9" filter="url(#bl05)"/>
<path d="M104.7 113.9 L110.1 118.2 L114.4 121.4" fill="none" stroke="#f4f6f8" stroke-width="1.5" stroke-opacity="0.40" stroke-linecap="round" stroke-linejoin="round" stroke-dasharray="3.2 1.3 1.6 0.9" filter="url(#bl05)"/>
<path d="M53.3 98.3 L61.8 97.6 L70.4 97.2" fill="none" stroke="#f4f6f8" stroke-width="1.6" stroke-opacity="0.55" stroke-linecap="round" stroke-linejoin="round" stroke-dasharray="3.2 1.3 1.6 0.9" filter="url(#bl05)"/>
<path d="M226.3 314.7 L225.9 320.7 L226.5 324.7 L230.2 329.7 L234.5 332.0" fill="none" stroke="#f4f6f8" stroke-width="2.4" stroke-opacity="0.85" stroke-linecap="round" stroke-linejoin="round" stroke-dasharray="3.2 1.3 1.6 0.9" filter="url(#bl05)"/>
<path d="M230.2 302.8 L228.0 308.8 L227.0 313.7" fill="none" stroke="#f4f6f8" stroke-width="1.4" stroke-opacity="0.50" stroke-linecap="round" stroke-linejoin="round" stroke-dasharray="3.2 1.3 1.6 0.9" filter="url(#bl05)"/>
<path d="M233.4 282.9 L233.4 289.9 L232.3 294.9" fill="none" stroke="#f4f6f8" stroke-width="1.2" stroke-opacity="0.40" stroke-linecap="round" stroke-linejoin="round" stroke-dasharray="3.2 1.3 1.6 0.9" filter="url(#bl05)"/>
<path d="M742.7 313.3 L747.0 311.2 L750.2 309.2 L753.0 307.2" fill="none" stroke="#f4f6f8" stroke-width="2.2" stroke-opacity="0.70" stroke-linecap="round" stroke-linejoin="round" stroke-dasharray="3.2 1.3 1.6 0.9" filter="url(#bl05)"/>
<path d="M718.0 120.8 L723.4 115.8 L727.7 110.9 L730.9 106.9" fill="none" stroke="#f4f6f8" stroke-width="1.6" stroke-opacity="0.35" stroke-linecap="round" stroke-linejoin="round" stroke-dasharray="3.2 1.3 1.6 0.9" filter="url(#bl05)"/>
<path d="M398.1 132.6 L402.8 131.0 L409.2 129.8" fill="none" stroke="#f4f6f8" stroke-width="1.0" stroke-opacity="0.30" stroke-linecap="round" stroke-linejoin="round" stroke-dasharray="3.2 1.3 1.6 0.9" filter="url(#bl05)"/>
<path d="M133.7 121.8 L129.4 118.6" fill="none" stroke="#f4f6f8" stroke-width="2.2" stroke-opacity="0.40" stroke-linecap="round" stroke-linejoin="round" stroke-dasharray="3.2 1.3 1.6 0.9" filter="url(#bl05)"/>
<path d="M124.0 116.8 L118.7 112.9" fill="none" stroke="#f4f6f8" stroke-width="1.8" stroke-opacity="0.30" stroke-linecap="round" stroke-linejoin="round" stroke-dasharray="3.2 1.3 1.6 0.9" filter="url(#bl05)"/>
<path d="M34.0 114.3 L26.5 116.2 L19.0 118.2 L10.4 119.4 L1.8 120.2" fill="none" stroke="#f4f6f8" stroke-width="0.9" stroke-opacity="0.22" stroke-linecap="round" stroke-linejoin="round" stroke-dasharray="3.2 1.3 1.6 0.9" filter="url(#bl05)"/>
<path d="M227.0 67.1 L237.7 63.5 L250.5 60.6 L272.0 59.2 L293.4 58.2 L314.9 57.2 L332.0 59.0 L344.9 61.0 L357.8 61.6 L349.2 64.1 L343.8 67.1 L342.8 71.1 L340.6 74.1 L337.4 78.1 L332.0 81.0 L336.3 83.2 L328.8 85.0 L321.3 87.4 L313.8 88.0 L306.3 92.4 L298.2 93.6 L294.5 97.6 L291.7 101.9 L289.6 104.1 L285.9 103.9 L280.6 102.3 L277.4 99.5 L273.1 96.0 L269.4 92.0 L268.1 88.4 L274.1 85.0 L266.6 83.0 L265.6 79.1 L260.2 74.5 L252.7 72.1 L242.0 72.1 L233.4 70.5Z" fill="#fbfcfd" stroke="#fbfcfd" stroke-width="0.5"/>
</g>
<path d="M484.3 134.1 L488.6 130.8 L493.9 129.8 L497.2 130.8 L497.2 133.2 L493.3 133.7 L491.4 135.1 L493.5 137.3 L496.5 138.3 L496.1 140.7 L498.2 142.1 L496.7 143.7 L498.9 145.7 L498.9 148.7 L495.0 150.1 L490.7 148.9 L488.6 146.7 L489.6 143.1 L487.5 140.1 L485.4 137.7Z" fill="#0a0620"/>
<path d="M186.2 130.4 L190.5 128.2 L194.8 126.2 L199.1 127.8 L201.9 130.2 L198.0 130.8 L193.7 129.8 L190.5 130.6Z" fill="#0a0620"/>
<path d="M194.8 132.2 L198.4 132.0 L200.2 133.7 L198.4 136.7 L197.4 140.3 L195.2 139.7 L195.2 135.7Z" fill="#0a0620"/>
<path d="M202.3 132.0 L207.7 131.8 L211.9 133.4 L210.9 134.9 L208.3 137.3 L206.6 137.5 L204.4 136.1 L204.9 133.7Z" fill="#0a0620"/>
<path d="M204.7 140.1 L209.8 138.3 L214.1 137.9 L214.1 138.7 L208.7 140.7Z" fill="#0a0620"/>
<path d="M212.4 137.1 L218.4 135.5 L219.9 136.5 L216.2 137.3Z" fill="#0a0620"/>
<path d="M171.6 116.2 L175.5 116.2 L177.0 121.8 L175.5 123.0 L173.3 119.8Z" fill="#0a0620"/>
<path d="M118.7 91.4 L126.2 90.0 L130.5 91.6 L124.0 94.0 L118.7 93.4Z" fill="#0a0620"/>
<path d="M132.6 101.5 L139.0 98.7 L147.6 98.3 L143.3 100.3 L136.9 102.1Z" fill="#0a0620"/>
<path d="M606.1 120.6 L609.7 118.2 L616.2 114.5 L619.0 112.3 L618.3 113.9 L615.1 117.2 L610.8 119.8 L607.6 120.8Z" fill="#0a0620"/>
<path d="M508.9 133.7 L512.2 130.6 L515.6 131.8 L514.3 135.1 L510.0 136.1Z" fill="#0a0620"/>
<path d="M448.9 103.9 L453.2 101.3 L454.3 102.9 L451.0 104.3Z" fill="#0a0620"/>
</g>
<g filter="url(#bl2)">
<ellipse cx="203.4" cy="94.8" rx="9.6" ry="2.6" fill="#c4c8cc" opacity="0.75"/>
<ellipse cx="213.0" cy="89.4" rx="6.4" ry="4.4" fill="#4c5c66" opacity="0.55"/>
<ellipse cx="177.6" cy="75.5" rx="21.4" ry="1.8" fill="#e8eaec" opacity="0.45"/>
<ellipse cx="160.5" cy="68.9" rx="19.3" ry="2.4" fill="#eef0f2" opacity="0.50"/>
<ellipse cx="194.8" cy="72.9" rx="10.7" ry="1.4" fill="#e8eaec" opacity="0.50"/>
<ellipse cx="211.9" cy="73.3" rx="6.4" ry="1.4" fill="#e8eaec" opacity="0.35"/>
<ellipse cx="229.1" cy="66.9" rx="5.4" ry="3.2" fill="#eef0f2" opacity="0.60"/>
<ellipse cx="139.0" cy="76.5" rx="8.6" ry="1.4" fill="#e0e2e4" opacity="0.35"/>
<ellipse cx="158.3" cy="84.8" rx="8.6" ry="1.2" fill="#d0d4d8" opacity="0.30"/>
<ellipse cx="207.7" cy="365.1" rx="5.4" ry="1.2" fill="#f0f2f4" opacity="0.55"/>
<ellipse cx="220.5" cy="363.5" rx="3.2" ry="1.4" fill="#f0f2f4" opacity="0.40"/>
<ellipse cx="217.7" cy="174.3" rx="2.6" ry="2.6" fill="#2a9ab8" opacity="0.75"/>
<ellipse cx="221.6" cy="178.3" rx="2.8" ry="1.2" fill="#2a8aa8" opacity="0.50"/>
<ellipse cx="211.9" cy="179.1" rx="3.2" ry="0.8" fill="#2a8aa8" opacity="0.35"/>
<ellipse cx="190.5" cy="80.0" rx="6.4" ry="3.0" fill="#d8dcde" opacity="0.35"/>
</g>
<g filter="url(#bl05)"><path d="M-2.5 402.3 L-2.5 378.4 L29.7 378.8 L44.7 377.0 L61.8 376.0 L83.3 373.0 L100.4 371.0 L115.4 370.0 L136.9 370.0 L151.9 371.0 L164.8 368.0 L179.8 367.2 L194.8 368.0 L216.2 368.4 L228.2 368.4 L228.2 365.1 L235.5 359.3 L244.3 354.1 L256.1 348.9 L264.9 348.4 L257.6 351.9 L254.6 356.3 L256.1 360.7 L254.0 366.6 L251.6 371.6 L261.9 373.8 L275.2 376.2 L287.0 377.6 L304.6 377.0 L319.0 375.6 L329.9 372.8 L340.6 369.4 L357.8 365.5 L372.8 363.5 L383.5 362.1 L404.9 362.1 L426.4 362.1 L447.8 360.5 L465.0 360.5 L480.0 357.5 L495.0 354.5 L507.9 356.5 L522.9 357.5 L533.6 359.5 L542.2 361.7 L550.8 359.1 L559.3 356.5 L576.5 355.5 L597.9 353.7 L615.1 355.1 L630.1 355.5 L645.1 355.9 L662.3 354.9 L675.1 354.9 L688.0 356.1 L700.9 358.5 L715.9 360.5 L726.6 362.5 L739.5 364.1 L749.1 365.7 L743.8 369.4 L736.3 372.4 L735.2 377.0 L743.8 378.4 L758.8 378.8 L769.5 378.4 L769.5 402.3Z" fill="#f7f8fa"/></g>
<path d="M61.84 44.5V402 M126.17 44.5V402 M190.50 44.5V402 M254.84 44.5V402 M319.17 44.5V402 M383.50 44.5V402 M447.83 44.5V402 M512.16 44.5V402 M576.50 44.5V402 M640.83 44.5V402 M705.16 44.5V402 M0 103.92H770 M0 163.58H770 M0 223.25H770 M0 282.92H770 M0 342.58H770" stroke="#8a8a8e" stroke-opacity="0.42" stroke-width="0.85" fill="none"/>
<g clip-path="url(#mapclip)">
<path d="M326.8 69.8 L337.7 70.0 L348.3 70.4 L358.3 71.2 L367.6 72.2 L375.9 73.4 L383.2 74.8 L389.5 76.4 L395.0 78.2 L399.6 80.1 L403.4 82.0 L406.6 84.1 L409.1 86.2 L411.2 88.3 L412.7 90.5 L413.9 92.8 L414.6 95.0 L415.1 97.3 L415.3 99.6 L415.2 101.8 L414.8 104.1 L414.3 106.3 L413.6 108.6 L412.7 110.8 L411.7 113.0 L410.5 115.2 L409.2 117.3 L407.8 119.5 L406.2 121.6 L404.6 123.6 L402.9 125.6 L401.1 127.6 L399.2 129.5 L397.2 131.4 L395.2 133.3 L393.0 135.1 L390.9 136.8 L388.6 138.5 L386.3 140.1 L384.0 141.7 L381.6 143.2 L379.1 144.7 L376.6 146.1 L374.1 147.4 L371.5 148.6 L368.9 149.8 L366.3 150.9 L363.6 152.0 L360.9 153.0 L358.1 153.9 L355.4 154.7 L352.6 155.5 L349.8 156.1 L346.9 156.8 L344.1 157.3 L341.2 157.7 L338.3 158.1 L335.5 158.4 L332.6 158.6 L329.7 158.7 L326.8 158.7 L323.9 158.7 L321.0 158.6 L318.1 158.4 L315.2 158.1 L312.3 157.7 L309.5 157.3 L306.6 156.8 L303.8 156.1 L301.0 155.5 L298.2 154.7 L295.4 153.9 L292.7 153.0 L290.0 152.0 L287.3 150.9 L284.6 149.8 L282.0 148.6 L279.5 147.4 L276.9 146.1 L274.4 144.7 L272.0 143.2 L269.6 141.7 L267.2 140.1 L264.9 138.5 L262.7 136.8 L260.5 135.1 L258.4 133.3 L256.4 131.4 L254.4 129.5 L252.5 127.6 L250.7 125.6 L248.9 123.6 L247.3 121.6 L245.8 119.5 L244.4 117.3 L243.1 115.2 L241.9 113.0 L240.8 110.8 L240.0 108.6 L239.2 106.3 L238.7 104.1 L238.4 101.8 L238.3 99.6 L238.5 97.3 L238.9 95.0 L239.7 92.8 L240.8 90.5 L242.4 88.3 L244.4 86.2 L247.0 84.1 L250.1 82.0 L254.0 80.1 L258.6 78.2 L264.0 76.4 L270.4 74.8 L277.7 73.4 L286.0 72.2 L295.2 71.2 L305.2 70.4 L315.8 70.0Z" fill="#ffffff" fill-opacity="0.12" stroke="#d8dc00" stroke-width="1.1"/>
<path d="M412.5 285.1 L415.5 285.2 L418.5 285.3 L421.5 285.5 L424.5 285.8 L427.5 286.2 L430.4 286.6 L433.4 287.2 L436.3 287.8 L439.2 288.5 L442.1 289.3 L444.9 290.2 L447.8 291.1 L450.6 292.1 L453.4 293.2 L456.1 294.4 L458.8 295.6 L461.5 296.9 L464.1 298.3 L466.7 299.7 L469.3 301.2 L471.8 302.8 L474.2 304.4 L476.6 306.1 L478.9 307.9 L481.2 309.7 L483.4 311.5 L485.6 313.5 L487.7 315.4 L489.7 317.4 L491.6 319.5 L493.4 321.6 L495.2 323.7 L496.9 325.9 L498.4 328.1 L499.8 330.3 L501.2 332.6 L502.3 334.9 L503.4 337.2 L504.3 339.6 L504.9 341.9 L505.4 344.3 L505.7 346.6 L505.7 349.0 L505.4 351.4 L504.9 353.8 L503.9 356.1 L502.5 358.4 L500.7 360.7 L498.3 363.0 L495.2 365.2 L491.4 367.3 L486.8 369.3 L481.3 371.2 L474.7 373.0 L466.9 374.5 L458.0 375.9 L447.9 377.0 L436.8 377.9 L424.9 378.4 L412.5 378.6 L400.2 378.4 L388.3 377.9 L377.2 377.0 L367.1 375.9 L358.1 374.5 L350.4 373.0 L343.8 371.2 L338.2 369.3 L333.6 367.3 L329.9 365.2 L326.8 363.0 L324.4 360.7 L322.5 358.4 L321.2 356.1 L320.2 353.8 L319.6 351.4 L319.4 349.0 L319.4 346.6 L319.6 344.3 L320.1 341.9 L320.8 339.6 L321.7 337.2 L322.7 334.9 L323.9 332.6 L325.2 330.3 L326.7 328.1 L328.2 325.9 L329.9 323.7 L331.6 321.6 L333.5 319.5 L335.4 317.4 L337.4 315.4 L339.5 313.5 L341.6 311.5 L343.9 309.7 L346.1 307.9 L348.5 306.1 L350.9 304.4 L353.3 302.8 L355.8 301.2 L358.4 299.7 L361.0 298.3 L363.6 296.9 L366.3 295.6 L369.0 294.4 L371.7 293.2 L374.5 292.1 L377.3 291.1 L380.1 290.2 L383.0 289.3 L385.9 288.5 L388.8 287.8 L391.7 287.2 L394.7 286.6 L397.6 286.2 L400.6 285.8 L403.6 285.5 L406.5 285.3 L409.5 285.2Z" fill="#ffffff" fill-opacity="0.12" stroke="#d8dc00" stroke-width="1.1"/>
<path d="M578.7 125.9 L583.1 126.0 L587.6 126.3 L591.9 126.8 L596.2 127.5 L600.3 128.4 L604.3 129.5 L608.2 130.7 L611.8 132.1 L615.3 133.6 L618.5 135.3 L621.5 137.2 L624.3 139.1 L626.9 141.2 L629.2 143.4 L631.3 145.6 L633.2 148.0 L634.9 150.4 L636.4 152.9 L637.7 155.4 L638.9 158.0 L639.8 160.6 L640.5 163.3 L641.1 165.9 L641.5 168.7 L641.7 171.4 L641.8 174.1 L641.8 176.8 L641.5 179.5 L641.2 182.2 L640.7 184.9 L640.1 187.6 L639.3 190.2 L638.4 192.8 L637.4 195.4 L636.3 197.9 L635.1 200.4 L633.7 202.9 L632.2 205.2 L630.7 207.5 L629.0 209.8 L627.2 211.9 L625.3 214.0 L623.3 216.1 L621.2 218.0 L619.1 219.8 L616.8 221.6 L614.5 223.2 L612.0 224.7 L609.6 226.2 L607.0 227.5 L604.3 228.7 L601.7 229.8 L598.9 230.8 L596.1 231.6 L593.3 232.3 L590.4 232.9 L587.5 233.4 L584.6 233.7 L581.6 233.9 L578.7 234.0 L575.7 233.9 L572.8 233.7 L569.8 233.4 L566.9 232.9 L564.1 232.3 L561.2 231.6 L558.4 230.8 L555.7 229.8 L553.0 228.7 L550.3 227.5 L547.8 226.2 L545.3 224.7 L542.9 223.2 L540.5 221.6 L538.2 219.8 L536.1 218.0 L534.0 216.1 L532.0 214.0 L530.1 211.9 L528.3 209.8 L526.7 207.5 L525.1 205.2 L523.6 202.9 L522.3 200.4 L521.0 197.9 L519.9 195.4 L518.9 192.8 L518.0 190.2 L517.3 187.6 L516.6 184.9 L516.1 182.2 L515.8 179.5 L515.6 176.8 L515.5 174.1 L515.6 171.4 L515.8 168.7 L516.2 165.9 L516.8 163.3 L517.5 160.6 L518.5 158.0 L519.6 155.4 L520.9 152.9 L522.4 150.4 L524.1 148.0 L526.0 145.6 L528.1 143.4 L530.5 141.2 L533.0 139.1 L535.8 137.2 L538.8 135.3 L542.1 133.6 L545.5 132.1 L549.2 130.7 L553.0 129.5 L557.0 128.4 L561.1 127.5 L565.4 126.8 L569.8 126.3 L574.2 126.0Z" fill="#ffffff" fill-opacity="0.12" stroke="#d8dc00" stroke-width="1.1"/>
<path d="M36.8 231.6 L39.1 231.7 L41.4 231.8 L43.7 232.1 L46.0 232.4 L48.3 232.9 L50.5 233.5 L52.8 234.1 L54.9 234.9 L57.1 235.7 L59.2 236.6 L61.2 237.7 L63.2 238.8 L65.2 240.0 L67.1 241.2 L68.9 242.6 L70.6 244.0 L72.3 245.5 L73.9 247.1 L75.5 248.7 L76.9 250.4 L78.3 252.2 L79.6 254.0 L80.8 255.9 L81.9 257.8 L82.9 259.7 L83.8 261.7 L84.6 263.8 L85.3 265.8 L85.9 267.9 L86.4 270.0 L86.7 272.2 L87.0 274.3 L87.1 276.4 L87.1 278.6 L87.0 280.7 L86.7 282.9 L86.3 285.0 L85.8 287.1 L85.1 289.2 L84.3 291.2 L83.3 293.3 L82.2 295.2 L80.9 297.2 L79.4 299.0 L77.8 300.8 L76.0 302.6 L74.1 304.2 L72.0 305.8 L69.7 307.3 L67.3 308.6 L64.7 309.9 L62.0 311.1 L59.2 312.1 L56.2 313.0 L53.2 313.8 L50.0 314.5 L46.8 315.0 L43.5 315.3 L40.1 315.5 L36.8 315.6 L33.4 315.5 L30.1 315.3 L26.8 315.0 L23.5 314.5 L20.4 313.8 L17.3 313.0 L14.3 312.1 L11.5 311.1 L8.8 309.9 L6.2 308.6 L3.8 307.3 L1.6 305.8 L-0.5 304.2 L-2.5 302.6 L-4.3 300.8 L-5.9 299.0 L-7.3 297.2 L-8.6 295.2 L-9.8 293.3 L-10.7 291.2 L-11.6 289.2 L-12.3 287.1 L-12.8 285.0 L-13.2 282.9 L-13.4 280.7 L-13.6 278.6 L-13.6 276.4 L-13.4 274.3 L-13.2 272.2 L-12.8 270.0 L-12.4 267.9 L-11.8 265.8 L-11.1 263.8 L-10.3 261.7 L-9.3 259.7 L-8.3 257.8 L-7.2 255.9 L-6.0 254.0 L-4.8 252.2 L-3.4 250.4 L-1.9 248.7 L-0.4 247.1 L1.2 245.5 L2.9 244.0 L4.7 242.6 L6.5 241.2 L8.4 240.0 L10.3 238.8 L12.3 237.7 L14.4 236.6 L16.5 235.7 L18.6 234.9 L20.8 234.1 L23.0 233.5 L25.3 232.9 L27.5 232.4 L29.8 232.1 L32.1 231.8 L34.4 231.7Z" fill="#ffffff" fill-opacity="0.12" stroke="#d8dc00" stroke-width="1.1"/>
<path d="M808.8 231.6 L811.1 231.7 L813.4 231.8 L815.7 232.1 L818.0 232.4 L820.3 232.9 L822.5 233.5 L824.7 234.1 L826.9 234.9 L829.1 235.7 L831.2 236.6 L833.2 237.7 L835.2 238.8 L837.2 240.0 L839.0 241.2 L840.9 242.6 L842.6 244.0 L844.3 245.5 L845.9 247.1 L847.5 248.7 L848.9 250.4 L850.3 252.2 L851.6 254.0 L852.8 255.9 L853.9 257.8 L854.9 259.7 L855.8 261.7 L856.6 263.8 L857.3 265.8 L857.9 267.9 L858.4 270.0 L858.7 272.2 L859.0 274.3 L859.1 276.4 L859.1 278.6 L859.0 280.7 L858.7 282.9 L858.3 285.0 L857.8 287.1 L857.1 289.2 L856.3 291.2 L855.3 293.3 L854.1 295.2 L852.9 297.2 L851.4 299.0 L849.8 300.8 L848.0 302.6 L846.1 304.2 L844.0 305.8 L841.7 307.3 L839.3 308.6 L836.7 309.9 L834.0 311.1 L831.2 312.1 L828.2 313.0 L825.2 313.8 L822.0 314.5 L818.8 315.0 L815.5 315.3 L812.1 315.5 L808.8 315.6 L805.4 315.5 L802.1 315.3 L798.8 315.0 L795.5 314.5 L792.4 313.8 L789.3 313.0 L786.3 312.1 L783.5 311.1 L780.8 309.9 L778.2 308.6 L775.8 307.3 L773.5 305.8 L771.4 304.2 L769.5 302.6 L767.7 300.8 L766.1 299.0 L764.7 297.2 L763.4 295.2 L762.2 293.3 L761.2 291.2 L760.4 289.2 L759.7 287.1 L759.2 285.0 L758.8 282.9 L758.5 280.7 L758.4 278.6 L758.4 276.4 L758.5 274.3 L758.8 272.2 L759.1 270.0 L759.6 267.9 L760.2 265.8 L760.9 263.8 L761.7 261.7 L762.6 259.7 L763.6 257.8 L764.7 255.9 L765.9 254.0 L767.2 252.2 L768.6 250.4 L770.1 248.7 L771.6 247.1 L773.2 245.5 L774.9 244.0 L776.6 242.6 L778.5 241.2 L780.3 240.0 L782.3 238.8 L784.3 237.7 L786.3 236.6 L788.5 235.7 L790.6 234.9 L792.8 234.1 L795.0 233.5 L797.2 232.9 L799.5 232.4 L801.8 232.1 L804.1 231.8 L806.4 231.7Z" fill="#ffffff" fill-opacity="0.12" stroke="#d8dc00" stroke-width="1.1"/>
<path d="M616.6 60.8 L633.9 61.0 L650.3 61.7 L664.9 62.7 L677.4 64.0 L687.8 65.6 L696.2 67.4 L702.9 69.4 L708.2 71.5 L712.4 73.6 L715.5 75.9 L717.8 78.1 L719.5 80.4 L720.6 82.8 L721.3 85.1 L721.5 87.5 L721.4 89.8 L721.0 92.2 L720.4 94.5 L719.6 96.8 L718.5 99.2 L717.3 101.5 L715.9 103.7 L714.4 106.0 L712.8 108.2 L711.1 110.4 L709.2 112.5 L707.3 114.7 L705.3 116.7 L703.2 118.8 L701.0 120.8 L698.8 122.7 L696.5 124.7 L694.1 126.5 L691.7 128.3 L689.2 130.1 L686.7 131.8 L684.1 133.5 L681.5 135.1 L678.8 136.6 L676.1 138.1 L673.4 139.6 L670.6 140.9 L667.8 142.2 L664.9 143.4 L662.1 144.6 L659.2 145.7 L656.2 146.7 L653.3 147.7 L650.3 148.6 L647.3 149.4 L644.3 150.1 L641.2 150.8 L638.2 151.4 L635.1 151.9 L632.0 152.3 L629.0 152.7 L625.9 152.9 L622.8 153.1 L619.7 153.3 L616.6 153.3 L613.4 153.3 L610.3 153.1 L607.2 152.9 L604.1 152.7 L601.1 152.3 L598.0 151.9 L594.9 151.4 L591.9 150.8 L588.8 150.1 L585.8 149.4 L582.8 148.6 L579.8 147.7 L576.9 146.7 L573.9 145.7 L571.0 144.6 L568.2 143.4 L565.3 142.2 L562.5 140.9 L559.7 139.6 L557.0 138.1 L554.3 136.6 L551.6 135.1 L549.0 133.5 L546.4 131.8 L543.9 130.1 L541.4 128.3 L539.0 126.5 L536.7 124.7 L534.3 122.7 L532.1 120.8 L529.9 118.8 L527.8 116.7 L525.8 114.7 L523.9 112.5 L522.0 110.4 L520.3 108.2 L518.7 106.0 L517.2 103.7 L515.8 101.5 L514.6 99.2 L513.5 96.8 L512.7 94.5 L512.1 92.2 L511.7 89.8 L511.6 87.5 L511.8 85.1 L512.5 82.8 L513.6 80.4 L515.3 78.1 L517.6 75.9 L520.7 73.6 L524.9 71.5 L530.2 69.4 L536.9 67.4 L545.3 65.6 L555.7 64.0 L568.2 62.7 L582.8 61.7 L599.2 61.0Z" fill="#ffffff" fill-opacity="0.12" stroke="#d8dc00" stroke-width="1.1"/>
<path d="M370.7 78.8 L379.1 79.0 L387.3 79.4 L395.2 80.0 L402.7 80.9 L409.6 82.0 L415.9 83.3 L421.6 84.8 L426.6 86.4 L431.1 88.2 L435.0 90.0 L438.3 92.0 L441.2 94.1 L443.5 96.2 L445.5 98.4 L447.0 100.6 L448.3 102.9 L449.2 105.2 L449.8 107.5 L450.1 109.8 L450.2 112.2 L450.1 114.5 L449.8 116.8 L449.4 119.1 L448.7 121.4 L447.9 123.7 L447.0 126.0 L445.9 128.2 L444.7 130.4 L443.4 132.6 L442.0 134.7 L440.5 136.8 L438.8 138.9 L437.1 140.9 L435.3 142.9 L433.5 144.8 L431.5 146.6 L429.5 148.5 L427.4 150.2 L425.3 151.9 L423.1 153.5 L420.8 155.1 L418.5 156.6 L416.1 158.0 L413.7 159.4 L411.3 160.7 L408.7 161.9 L406.2 163.0 L403.6 164.1 L401.0 165.1 L398.3 166.0 L395.7 166.8 L393.0 167.5 L390.2 168.2 L387.5 168.8 L384.7 169.2 L381.9 169.6 L379.1 170.0 L376.3 170.2 L373.5 170.3 L370.7 170.4 L367.9 170.3 L365.1 170.2 L362.3 170.0 L359.5 169.6 L356.7 169.2 L354.0 168.8 L351.2 168.2 L348.5 167.5 L345.8 166.8 L343.1 166.0 L340.4 165.1 L337.8 164.1 L335.2 163.0 L332.7 161.9 L330.2 160.7 L327.7 159.4 L325.3 158.0 L322.9 156.6 L320.6 155.1 L318.4 153.5 L316.1 151.9 L314.0 150.2 L311.9 148.5 L309.9 146.6 L308.0 144.8 L306.1 142.9 L304.3 140.9 L302.6 138.9 L301.0 136.8 L299.5 134.7 L298.0 132.6 L296.7 130.4 L295.5 128.2 L294.5 126.0 L293.5 123.7 L292.7 121.4 L292.1 119.1 L291.6 116.8 L291.3 114.5 L291.2 112.2 L291.3 109.8 L291.7 107.5 L292.3 105.2 L293.2 102.9 L294.4 100.6 L296.0 98.4 L297.9 96.2 L300.3 94.1 L303.1 92.0 L306.5 90.0 L310.3 88.2 L314.8 86.4 L319.9 84.8 L325.6 83.3 L331.9 82.0 L338.8 80.9 L346.2 80.0 L354.1 79.4 L362.3 79.0Z" fill="#ffffff" fill-opacity="0.12" stroke="#d8dc00" stroke-width="1.1"/>
</g>
<rect x="325.58" y="113.08" width="2.4" height="2.4" fill="#f0f000"/>
<text x="326.78" y="121.88" text-anchor="middle" fill="#e6e600" stroke="#e6e600" stroke-width="0.25" font-size="6.50" >AALTO-1</text>
<rect x="411.34" y="330.64" width="2.4" height="2.4" fill="#f0f000"/>
<text x="412.54" y="339.44" text-anchor="middle" fill="#e6e600" stroke="#e6e600" stroke-width="0.25" font-size="6.50" >AAUSAT 4</text>
<rect x="577.46" y="178.75" width="2.4" height="2.4" fill="#f0f000"/>
<text x="578.66" y="187.55" text-anchor="middle" fill="#e6e600" stroke="#e6e600" stroke-width="0.25" font-size="6.50" >AO-27</text>
<rect x="35.57" y="272.43" width="2.4" height="2.4" fill="#f0f000"/>
<text x="36.77" y="281.23" text-anchor="middle" fill="#e6e600" stroke="#e6e600" stroke-width="0.25" font-size="6.50" >AO-71</text>
<rect x="615.35" y="105.84" width="2.4" height="2.4" fill="#f0f000"/>
<text x="616.55" y="114.64" text-anchor="middle" fill="#e6e600" stroke="#e6e600" stroke-width="0.25" font-size="6.50" >AO-85</text>
<rect x="369.52" y="123.40" width="2.4" height="2.4" fill="#f0f000"/>
<text x="370.72" y="132.20" text-anchor="middle" fill="#e6e600" stroke="#e6e600" stroke-width="0.25" font-size="6.50" >AO-91</text>
<rect x="404.70" y="111.96" width="2.2" height="2.2" fill="#00e0e0"/>
<text x="406.30" y="120.66" text-anchor="middle" fill="#00d8d8" stroke="#00d8d8" stroke-width="0.25" font-size="6.50" >Odense</text>
<rect x="0" y="44.5" width="90.5" height="8.3" fill="#000"/>
<text x="0.80" y="51.40" text-anchor="start" fill="#00f000" stroke="#00f000" stroke-width="0.25" font-size="6.60" textLength="88.6" lengthAdjust="spacingAndGlyphs">Odense - Odense, Denmark</text>
<rect x="697.3" y="44.5" width="70.4" height="8.3" fill="#000"/>
<text x="698.40" y="51.40" text-anchor="start" fill="#00f000" stroke="#00f000" stroke-width="0.25" font-size="6.60" textLength="68.2" lengthAdjust="spacingAndGlyphs">Next: AO-27 in 14:16</text>
<text x="0.80" y="110.52" text-anchor="start" fill="#7c7986" stroke="#7c7986" stroke-width="0.00" font-size="6.00" >60°</text>
<text x="0.80" y="170.18" text-anchor="start" fill="#7c7986" stroke="#7c7986" stroke-width="0.00" font-size="6.00" >30°</text>
<text x="0.80" y="229.85" text-anchor="start" fill="#7c7986" stroke="#7c7986" stroke-width="0.00" font-size="6.00" >0°</text>
<text x="0.80" y="289.52" text-anchor="start" fill="#7c7986" stroke="#7c7986" stroke-width="0.00" font-size="6.00" >-30°</text>
<text x="0.80" y="349.18" text-anchor="start" fill="#7c7986" stroke="#7c7986" stroke-width="0.00" font-size="6.00" >-60°</text>
<text x="60.24" y="400.70" text-anchor="end" fill="#a2a2aa" stroke="#a2a2aa" stroke-width="0.00" font-size="6.00" >-150°</text>
<text x="124.57" y="400.70" text-anchor="end" fill="#a2a2aa" stroke="#a2a2aa" stroke-width="0.00" font-size="6.00" >-120°</text>
<text x="188.90" y="400.70" text-anchor="end" fill="#a2a2aa" stroke="#a2a2aa" stroke-width="0.00" font-size="6.00" >-90°</text>
<text x="253.24" y="400.70" text-anchor="end" fill="#a2a2aa" stroke="#a2a2aa" stroke-width="0.00" font-size="6.00" >-60°</text>
<text x="317.57" y="400.70" text-anchor="end" fill="#a2a2aa" stroke="#a2a2aa" stroke-width="0.00" font-size="6.00" >-30°</text>
<text x="381.90" y="400.70" text-anchor="end" fill="#a2a2aa" stroke="#a2a2aa" stroke-width="0.00" font-size="6.00" >0°</text>
<text x="446.23" y="400.70" text-anchor="end" fill="#a2a2aa" stroke="#a2a2aa" stroke-width="0.00" font-size="6.00" >30°</text>
<text x="510.56" y="400.70" text-anchor="end" fill="#a2a2aa" stroke="#a2a2aa" stroke-width="0.00" font-size="6.00" >60°</text>
<text x="574.90" y="400.70" text-anchor="end" fill="#a2a2aa" stroke="#a2a2aa" stroke-width="0.00" font-size="6.00" >90°</text>
<text x="639.23" y="400.70" text-anchor="end" fill="#a2a2aa" stroke="#a2a2aa" stroke-width="0.00" font-size="6.00" >120°</text>
<text x="703.56" y="400.70" text-anchor="end" fill="#a2a2aa" stroke="#a2a2aa" stroke-width="0.00" font-size="6.00" >150°</text>
</svg>
<div id="mapedge"></div>
<div id="polarbg"></div>
<svg class="abs" style="left:770px;top:44px" width="254" height="240" viewBox="770 44 254 240">
<circle cx="897.60" cy="163.50" r="104.10" fill="none" stroke="#4c4c4c" stroke-width="0.6"/>
<circle cx="897.60" cy="163.50" r="69.40" fill="none" stroke="#4c4c4c" stroke-width="0.6"/>
<circle cx="897.60" cy="163.50" r="34.70" fill="none" stroke="#4c4c4c" stroke-width="0.6"/>
<path d="M791.90 163.50 H1004.10 M897.60 57.90 V269.10" stroke="#4c4c4c" stroke-width="0.6" fill="none"/>
<rect x="796.7" y="138.4" width="3.4" height="3.4" fill="#8b0000"/>
<rect x="818.5" y="196.3" width="3.4" height="3.4" fill="#8b0000"/>
<text x="798.30" y="147.20" text-anchor="middle" fill="#8b0000" font-size="6.60" >AALTO-1</text>
<text x="820.20" y="205.30" text-anchor="middle" fill="#8b0000" font-size="6.60" >AO-91</text>
<text x="787.50" y="54.90" text-anchor="start" fill="#3a00a8" font-size="6.60" >Odense</text>
<text x="1007.60" y="54.90" text-anchor="end" fill="#3a00a8" font-size="6.60" >Next: AO-27</text>
<text x="1007.60" y="62.90" text-anchor="end" fill="#3a00a8" font-size="6.60" >in 14:16</text>
<text x="897.50" y="55.00" text-anchor="middle" fill="#00a000" font-size="7.60" >N</text>
<text x="897.60" y="277.80" text-anchor="middle" fill="#00a000" font-size="7.60" >S</text>
<text x="787.00" y="166.00" text-anchor="middle" fill="#00a000" font-size="7.60" >W</text>
<text x="1007.60" y="166.00" text-anchor="middle" fill="#00a000" font-size="7.60" >E</text>
</svg>
<div id="rlist_hdr"></div>
<div class="vsep" style="left:820.5px;top:284px;height:15px"></div>
<div class="vsep" style="left:854.0px;top:284px;height:15px"></div>
<div class="vsep" style="left:884.7px;top:284px;height:15px"></div>
<span class="t" style="letter-spacing:0.210px;left:773.50px;top:285.30px;color:#5c5c5c">Satellite</span>
<span class="t" style="left:827.30px;top:285.30px;color:#5c5c5c">Az</span>
<span class="t" style="left:861.30px;top:285.30px;color:#5c5c5c">El</span>
<svg class="abs" style="left:0;top:0" width="1024" height="521" viewBox="0 0 1024 521"><polygon points="891.30,292.65 897.30,292.65 894.30,289.35" fill="#4a4a4a"/></svg>
<span class="t" style="letter-spacing:-0.305px;left:986.00px;top:285.30px;color:#5c5c5c">AOS/LOS</span>
<span class="t" style="left:771.80px;top:300.80px;font-weight:bold;color:#3c3c3c">AALTO-1</span>
<span class="t" style="letter-spacing:-0.091px;left:823.40px;top:300.80px;font-weight:bold;color:#3c3c3c">283.45°</span>
<span class="t" style="letter-spacing:-0.069px;left:863.60px;top:300.80px;font-weight:bold;color:#3c3c3c">1.58°</span>
<span class="t" style="letter-spacing:-0.182px;left:1003.90px;top:300.80px;font-weight:bold;color:#3c3c3c">00:41</span>
<span class="t" style="left:771.80px;top:314.60px;font-weight:bold;color:#3c3c3c">AO-91</span>
<span class="t" style="letter-spacing:-0.091px;left:823.40px;top:314.60px;font-weight:bold;color:#3c3c3c">246.02°</span>
<span class="t" style="letter-spacing:-0.082px;left:858.85px;top:314.60px;font-weight:bold;color:#3c3c3c">16.59°</span>
<span class="t" style="letter-spacing:-0.182px;left:1003.90px;top:314.60px;font-weight:bold;color:#3c3c3c">07:10</span>
<span class="t" style="left:771.80px;top:328.40px;color:#5e5e5e">AO-27</span>
<span class="t" style="letter-spacing:-0.290px;left:829.40px;top:328.40px;color:#5e5e5e">84.53°</span>
<span class="t" style="letter-spacing:-0.139px;left:856.40px;top:328.40px;color:#5e5e5e">-28.43°</span>
<span class="t" style="letter-spacing:-0.324px;left:1005.10px;top:328.40px;color:#5e5e5e">14:16</span>
<span class="t" style="left:771.80px;top:342.20px;color:#5e5e5e">AO-71</span>
<span class="t" style="letter-spacing:-0.305px;left:824.90px;top:342.20px;color:#5e5e5e">345.91°</span>
<span class="t" style="letter-spacing:-0.139px;left:856.40px;top:342.20px;color:#5e5e5e">-73.93°</span>
<span class="t" style="letter-spacing:-0.194px;left:1005.10px;top:342.20px;color:#5e5e5e">33:11</span>
<span class="t" style="left:771.80px;top:356.00px;color:#5e5e5e">AAUSAT 4</span>
<span class="t" style="letter-spacing:-0.305px;left:824.90px;top:356.00px;color:#5e5e5e">178.01°</span>
<span class="t" style="letter-spacing:-0.139px;left:856.40px;top:356.00px;color:#5e5e5e">-53.32°</span>
<span class="t" style="letter-spacing:-0.307px;left:993.70px;top:356.00px;color:#5e5e5e">01:01:33</span>
<span class="t" style="left:771.80px;top:369.80px;color:#5e5e5e">AO-85</span>
<span class="t" style="letter-spacing:-0.290px;left:829.40px;top:369.80px;color:#5e5e5e">43.52°</span>
<span class="t" style="letter-spacing:-0.139px;left:856.40px;top:369.80px;color:#5e5e5e">-19.07°</span>
<span class="t" style="letter-spacing:-0.307px;left:993.70px;top:369.80px;color:#5e5e5e">01:21:14</span>
<div id="rlist_foot"></div>
<svg class="abs" style="left:773.5px;top:405px" width="8" height="8" viewBox="0 0 8 8"><rect x="0.9" y="0.9" width="6.2" height="6.2" rx="1.3" fill="#fafafa" stroke="#555" stroke-width="0.9"/><path d="M2.5 3 L5.5 3 L4 5.3 Z" fill="#333"/></svg>
<span class="t" style="letter-spacing:-0.251px;left:791.80px;top:403.20px;font-weight:bold;color:#3c3c3c">1KUNS-PF</span>
<span class="t" style="letter-spacing:0.173px;left:803.20px;top:418.60px;color:#4c4c4c">Azimuth</span>
<span class="t" style="left:839.60px;top:418.60px;color:#4c4c4c">:</span>
<span class="t" style="letter-spacing:-0.162px;left:845.00px;top:418.60px;color:#4c4c4c">326.35°</span>
<span class="t" style="letter-spacing:0.066px;left:799.40px;top:428.82px;color:#4c4c4c">Elevation</span>
<span class="t" style="left:839.60px;top:428.82px;color:#4c4c4c">:</span>
<span class="t" style="letter-spacing:-0.146px;left:845.00px;top:428.82px;color:#4c4c4c">-55.11°</span>
<span class="t" style="letter-spacing:-0.176px;left:789.70px;top:439.04px;color:#4c4c4c">Slant Range</span>
<span class="t" style="left:839.60px;top:439.04px;color:#4c4c4c">:</span>
<span class="t" style="letter-spacing:-0.081px;left:845.00px;top:439.04px;color:#4c4c4c">10638 km</span>
<span class="t" style="letter-spacing:-0.267px;left:791.90px;top:449.26px;color:#4c4c4c">Range Rate</span>
<span class="t" style="left:839.60px;top:449.26px;color:#4c4c4c">:</span>
<span class="t" style="letter-spacing:0.014px;left:845.00px;top:449.26px;color:#4c4c4c">2.434 km/sec</span>
<span class="t" style="letter-spacing:0.046px;left:792.70px;top:459.48px;color:#4c4c4c">Next Event</span>
<span class="t" style="left:839.60px;top:459.48px;color:#4c4c4c">:</span>
<span class="t" style="letter-spacing:0.110px;left:845.00px;top:459.48px;color:#4c4c4c">N/A</span>
<span class="t" style="letter-spacing:-0.350px;left:802.47px;top:469.70px;color:#4c4c4c">SSP Loc.</span>
<span class="t" style="left:839.60px;top:469.70px;color:#4c4c4c">:</span>
<span class="t" style="letter-spacing:-0.350px;left:845.00px;top:469.70px;color:#4c4c4c">CJ08WC</span>
<span class="t" style="letter-spacing:0.419px;left:797.70px;top:479.92px;color:#4c4c4c">Footprint</span>
<span class="t" style="left:839.60px;top:479.92px;color:#4c4c4c">:</span>
<span class="t" style="letter-spacing:-0.108px;left:845.00px;top:479.92px;color:#4c4c4c">2591 km</span>
<span class="t" style="letter-spacing:0.393px;left:803.70px;top:490.14px;color:#4c4c4c">Altitude</span>
<span class="t" style="left:839.60px;top:490.14px;color:#4c4c4c">:</span>
<span class="t" style="letter-spacing:-0.143px;left:845.00px;top:490.14px;color:#4c4c4c">134 km</span>
<span class="t" style="letter-spacing:0.184px;left:804.40px;top:500.36px;color:#4c4c4c">Velocity</span>
<span class="t" style="left:839.60px;top:500.36px;color:#4c4c4c">:</span>
<span class="t" style="letter-spacing:0.014px;left:845.00px;top:500.36px;color:#4c4c4c">7.828 km/sec</span>
<span class="t" style="letter-spacing:0.145px;left:772.70px;top:510.58px;color:#4c4c4c">Doppler@100M</span>
<span class="t" style="left:839.60px;top:510.58px;color:#4c4c4c">:</span>
<span class="t" style="letter-spacing:-0.350px;left:845.00px;top:510.58px;color:#4c4c4c">-812 Hz</span>
<div id="bt_hdr"></div>
<div class="vsep" style="left:48.7px;top:403px;height:15px"></div>
<div class="vsep" style="left:81.7px;top:403px;height:15px"></div>
<div class="vsep" style="left:113.0px;top:403px;height:15px"></div>
<div class="vsep" style="left:143.5px;top:403px;height:15px"></div>
<div class="vsep" style="left:186.7px;top:403px;height:15px"></div>
<div class="vsep" style="left:294.0px;top:403px;height:15px"></div>
<div class="vsep" style="left:379.5px;top:403px;height:15px"></div>
<div class="vsep" style="left:464.7px;top:403px;height:15px"></div>
<div class="vsep" style="left:497.2px;top:403px;height:15px"></div>
<div class="vsep" style="left:535.0px;top:403px;height:15px"></div>
<div class="vsep" style="left:565.5px;top:403px;height:15px"></div>
<div class="vsep" style="left:596.7px;top:403px;height:15px"></div>
<span class="t" style="letter-spacing:0.144px;left:2.00px;top:404.30px;color:#5c5c5c">Satellite</span>
<svg class="abs" style="left:0;top:0" width="1024" height="521" viewBox="0 0 1024 521"><polygon points="38.00,411.25 44.00,411.25 41.00,407.95" fill="#4a4a4a"/></svg>
<span class="t" style="left:55.50px;top:404.30px;color:#5c5c5c">Az</span>
<span class="t" style="left:89.30px;top:404.30px;color:#5c5c5c">El</span>
<span class="t" style="left:117.60px;top:404.30px;color:#5c5c5c">Dir</span>
<span class="t" style="letter-spacing:-0.187px;left:148.00px;top:404.30px;color:#5c5c5c">Range</span>
<span class="t" style="letter-spacing:0.016px;left:213.70px;top:404.30px;color:#5c5c5c">Next Event</span>
<span class="t" style="letter-spacing:-0.067px;left:313.35px;top:404.30px;color:#5c5c5c">Next AOS</span>
<span class="t" style="letter-spacing:-0.169px;left:399.10px;top:404.30px;color:#5c5c5c">Next LOS</span>
<span class="t" style="left:469.80px;top:404.30px;color:#5c5c5c">Lat</span>
<span class="t" style="left:503.50px;top:404.30px;color:#5c5c5c">Lon</span>
<span class="t" style="left:539.50px;top:404.30px;color:#5c5c5c">Alt</span>
<span class="t" style="left:570.00px;top:404.30px;color:#5c5c5c">Vel</span>
<span class="t" style="left:668.77px;top:404.30px;color:#5c5c5c">Orbit</span>
<div id="bt_sel"></div>
<span class="t" style="left:0.30px;top:420.00px;font-weight:bold;color:#3a3a3a">AALTO-1</span>
<span class="t" style="letter-spacing:-0.091px;left:51.60px;top:420.00px;font-weight:bold;color:#3a3a3a">283.45°</span>
<span class="t" style="letter-spacing:-0.069px;left:91.60px;top:420.00px;font-weight:bold;color:#3a3a3a">1.58°</span>
<span class="t" style="left:126.30px;top:419.70px;font-weight:bold;color:#3a3a3a;font-family:'DejaVu Sans',sans-serif;font-size:8px">↓</span>
<span class="t" style="letter-spacing:-0.144px;left:166.80px;top:420.00px;font-weight:bold;color:#3a3a3a">2454</span>
<span class="t" style="letter-spacing:-0.071px;left:190.00px;top:420.00px;font-weight:bold;color:#3a3a3a">LOS: 2020/07/06 11:28:21</span>
<span class="t" style="letter-spacing:-0.022px;left:297.30px;top:420.00px;font-weight:bold;color:#3a3a3a">2020/07/06 17:26:30</span>
<span class="t" style="letter-spacing:-0.023px;left:382.80px;top:420.00px;font-weight:bold;color:#3a3a3a">2020/07/06 11:28:21</span>
<span class="t" style="letter-spacing:-0.082px;left:469.85px;top:420.00px;font-weight:bold;color:#3a3a3a">54.79°</span>
<span class="t" style="letter-spacing:0.054px;left:502.75px;top:420.00px;font-weight:bold;color:#3a3a3a">-26.45°</span>
<span class="t" style="letter-spacing:-0.144px;left:550.35px;top:420.00px;font-weight:bold;color:#3a3a3a">518</span>
<span class="t" style="letter-spacing:-0.164px;left:569.00px;top:420.00px;font-weight:bold;color:#3a3a3a">7.605</span>
<span class="t" style="letter-spacing:-0.144px;left:743.95px;top:420.00px;font-weight:bold;color:#3a3a3a">16857</span>
<span class="t" style="left:0.30px;top:434.42px;color:#5e5e5e">AAUSAT 4</span>
<span class="t" style="letter-spacing:-0.305px;left:53.10px;top:434.42px;color:#5e5e5e">178.01°</span>
<span class="t" style="letter-spacing:-0.139px;left:84.40px;top:434.42px;color:#5e5e5e">-53.32°</span>
<span class="t" style="left:126.30px;top:434.12px;color:#5e5e5e;font-family:'DejaVu Sans',sans-serif;font-size:8px">↓</span>
<span class="t" style="letter-spacing:-0.350px;left:163.08px;top:434.42px;color:#5e5e5e">10887</span>
<span class="t" style="letter-spacing:-0.051px;left:190.00px;top:434.42px;color:#5e5e5e">AOS: 2020/07/06 12:29:13</span>
<span class="t" style="letter-spacing:0.029px;left:297.30px;top:434.42px;color:#5e5e5e">2020/07/06 12:29:13</span>
<span class="t" style="letter-spacing:0.003px;left:382.80px;top:434.42px;color:#5e5e5e">2020/07/06 12:39:34</span>
<span class="t" style="letter-spacing:-0.139px;left:467.40px;top:434.42px;color:#5e5e5e">-54.60°</span>
<span class="t" style="letter-spacing:-0.290px;left:507.80px;top:434.42px;color:#5e5e5e">13.54°</span>
<span class="t" style="letter-spacing:-0.350px;left:550.97px;top:434.42px;color:#5e5e5e">576</span>
<span class="t" style="letter-spacing:-0.164px;left:569.00px;top:434.42px;color:#5e5e5e">7.563</span>
<span class="t" style="letter-spacing:-0.350px;left:744.98px;top:434.42px;color:#5e5e5e">23051</span>
<span class="t" style="left:0.30px;top:448.84px;color:#5e5e5e">AO-27</span>
<span class="t" style="letter-spacing:-0.290px;left:57.60px;top:448.84px;color:#5e5e5e">84.53°</span>
<span class="t" style="letter-spacing:-0.139px;left:84.40px;top:448.84px;color:#5e5e5e">-28.43°</span>
<span class="t" style="left:126.30px;top:448.54px;color:#5e5e5e;font-family:'DejaVu Sans',sans-serif;font-size:8px">↑</span>
<span class="t" style="letter-spacing:-0.350px;left:167.62px;top:448.84px;color:#5e5e5e">7507</span>
<span class="t" style="letter-spacing:-0.024px;left:190.00px;top:448.84px;color:#5e5e5e">AOS: 2020/07/06 11:41:55</span>
<span class="t" style="letter-spacing:0.064px;left:297.30px;top:448.84px;color:#5e5e5e">2020/07/06 11:41:55</span>
<span class="t" style="letter-spacing:0.037px;left:382.80px;top:448.84px;color:#5e5e5e">2020/07/06 11:48:02</span>
<span class="t" style="letter-spacing:-0.290px;left:471.10px;top:448.84px;color:#5e5e5e">21.77°</span>
<span class="t" style="letter-spacing:-0.290px;left:507.80px;top:448.84px;color:#5e5e5e">91.01°</span>
<span class="t" style="letter-spacing:-0.350px;left:550.97px;top:448.84px;color:#5e5e5e">791</span>
<span class="t" style="letter-spacing:-0.164px;left:569.00px;top:448.84px;color:#5e5e5e">7.462</span>
<span class="t" style="letter-spacing:-0.350px;left:744.98px;top:448.84px;color:#5e5e5e">39681</span>
<span class="t" style="left:0.30px;top:463.26px;color:#5e5e5e">AO-71</span>
<span class="t" style="letter-spacing:-0.305px;left:53.10px;top:463.26px;color:#5e5e5e">345.91°</span>
<span class="t" style="letter-spacing:-0.139px;left:84.40px;top:463.26px;color:#5e5e5e">-73.93°</span>
<span class="t" style="left:126.30px;top:462.96px;color:#5e5e5e;font-family:'DejaVu Sans',sans-serif;font-size:8px">↑</span>
<span class="t" style="letter-spacing:-0.350px;left:163.08px;top:463.26px;color:#5e5e5e">12728</span>
<span class="t" style="letter-spacing:-0.051px;left:190.00px;top:463.26px;color:#5e5e5e">AOS: 2020/07/06 12:00:51</span>
<span class="t" style="letter-spacing:0.029px;left:297.30px;top:463.26px;color:#5e5e5e">2020/07/06 12:00:51</span>
<span class="t" style="letter-spacing:0.003px;left:382.80px;top:463.26px;color:#5e5e5e">2020/07/06 12:13:20</span>
<span class="t" style="letter-spacing:-0.139px;left:467.40px;top:463.26px;color:#5e5e5e">-25.33°</span>
<span class="t" style="letter-spacing:-0.171px;left:499.60px;top:463.26px;color:#5e5e5e">-161.69°</span>
<span class="t" style="letter-spacing:-0.350px;left:550.97px;top:463.26px;color:#5e5e5e">459</span>
<span class="t" style="letter-spacing:-0.164px;left:569.00px;top:463.26px;color:#5e5e5e">7.688</span>
<span class="t" style="letter-spacing:-0.350px;left:744.98px;top:463.26px;color:#5e5e5e">47479</span>
<span class="t" style="left:0.30px;top:477.68px;color:#5e5e5e">AO-85</span>
<span class="t" style="letter-spacing:-0.290px;left:57.60px;top:477.68px;color:#5e5e5e">43.52°</span>
<span class="t" style="letter-spacing:-0.139px;left:84.40px;top:477.68px;color:#5e5e5e">-19.07°</span>
<span class="t" style="left:126.30px;top:477.38px;color:#5e5e5e;font-family:'DejaVu Sans',sans-serif;font-size:8px">↓</span>
<span class="t" style="letter-spacing:-0.350px;left:167.62px;top:477.68px;color:#5e5e5e">5537</span>
<span class="t" style="letter-spacing:-0.051px;left:190.00px;top:477.68px;color:#5e5e5e">AOS: 2020/07/06 12:48:53</span>
<span class="t" style="letter-spacing:0.029px;left:297.30px;top:477.68px;color:#5e5e5e">2020/07/06 12:48:53</span>
<span class="t" style="letter-spacing:0.003px;left:382.80px;top:477.68px;color:#5e5e5e">2020/07/06 13:00:57</span>
<span class="t" style="letter-spacing:-0.290px;left:471.10px;top:477.68px;color:#5e5e5e">58.43°</span>
<span class="t" style="letter-spacing:-0.305px;left:503.30px;top:477.68px;color:#5e5e5e">108.68°</span>
<span class="t" style="letter-spacing:-0.350px;left:550.97px;top:477.68px;color:#5e5e5e">564</span>
<span class="t" style="letter-spacing:-0.164px;left:569.00px;top:477.68px;color:#5e5e5e">7.632</span>
<span class="t" style="letter-spacing:-0.350px;left:744.98px;top:477.68px;color:#5e5e5e">16460</span>
<span class="t" style="left:0.30px;top:492.10px;font-weight:bold;color:#3a3a3a">AO-91</span>
<span class="t" style="letter-spacing:-0.091px;left:51.60px;top:492.10px;font-weight:bold;color:#3a3a3a">246.02°</span>
<span class="t" style="letter-spacing:-0.082px;left:86.85px;top:492.10px;font-weight:bold;color:#3a3a3a">16.59°</span>
<span class="t" style="left:126.30px;top:491.80px;font-weight:bold;color:#3a3a3a;font-family:'DejaVu Sans',sans-serif;font-size:8px">↑</span>
<span class="t" style="letter-spacing:-0.144px;left:166.80px;top:492.10px;font-weight:bold;color:#3a3a3a">1442</span>
<span class="t" style="letter-spacing:-0.071px;left:190.00px;top:492.10px;font-weight:bold;color:#3a3a3a">LOS: 2020/07/06 11:34:50</span>
<span class="t" style="letter-spacing:-0.022px;left:297.30px;top:492.10px;font-weight:bold;color:#3a3a3a">2020/07/06 21:27:12</span>
<span class="t" style="letter-spacing:-0.023px;left:382.80px;top:492.10px;font-weight:bold;color:#3a3a3a">2020/07/06 11:34:50</span>
<span class="t" style="letter-spacing:-0.082px;left:469.85px;top:492.10px;font-weight:bold;color:#3a3a3a">49.60°</span>
<span class="t" style="letter-spacing:0.087px;left:507.50px;top:492.10px;font-weight:bold;color:#3a3a3a">-5.96°</span>
<span class="t" style="letter-spacing:-0.144px;left:550.35px;top:492.10px;font-weight:bold;color:#3a3a3a">551</span>
<span class="t" style="letter-spacing:-0.164px;left:569.00px;top:492.10px;font-weight:bold;color:#3a3a3a">7.640</span>
<span class="t" style="letter-spacing:-0.144px;left:743.95px;top:492.10px;font-weight:bold;color:#3a3a3a">14198</span>
<div id="pw"></div>
<div id="pw_title"></div>
<span class="t" style="letter-spacing:0.068px;left:427.30px;top:149.90px;font-weight:bold;color:#c9c6be">Pass details for AO-85 (orbit 16461)</span>
<div class="closebtn" style="left:669.9px;top:150.7px;width:10.2px;height:10.2px"></div>
<div id="pw_tab"></div>
<svg class="abs" style="left:326px;top:169px" width="100" height="11" viewBox="326 169 100 11"><path d="M326.2 171.1H334.8M326.2 173.85H334.8M326.2 176.6H334.8" stroke="#262626" stroke-width="1.5"/><rect x="370.3" y="169.9" width="8.2" height="8.2" rx="1.6" fill="#b9b8b7" stroke="#2e2e2e" stroke-width="1"/><circle cx="374.4" cy="174" r="2.9" fill="#cfcfce" stroke="#2a2a2a" stroke-width="0.8"/><circle cx="374.4" cy="174" r="1.2" fill="none" stroke="#333" stroke-width="0.6"/><path d="M374.4 170.6V177.4M371 174H377.8" stroke="#333" stroke-width="0.5"/><rect x="415.4" y="169.9" width="8.6" height="8.2" rx="1.3" fill="#c6c5c4" stroke="#333" stroke-width="1"/><path d="M417 176.8 L419 172.6 L421 175.4 L422.8 171.4" stroke="#b02828" stroke-width="0.9" fill="none"/><path d="M417.2 177 L420 171.5 L422.5 177" stroke="#2b3a8a" stroke-width="0.7" fill="none"/></svg>
<span class="t" style="letter-spacing:-0.072px;left:339.80px;top:168.60px;color:#2e2e2e">Data</span>
<span class="t" style="letter-spacing:0.091px;left:383.50px;top:168.60px;color:#2e2e2e">Polar</span>
<span class="t" style="letter-spacing:0.192px;left:428.50px;top:168.60px;color:#2e2e2e">Az/El</span>
<div id="pw_hdr"></div>
<div class="vsep2" style="left:405.7px;top:183px;height:16px"></div>
<div class="vsep2" style="left:439.0px;top:183px;height:16px"></div>
<div class="vsep2" style="left:467.7px;top:183px;height:16px"></div>
<div class="vsep2" style="left:499.7px;top:183px;height:16px"></div>
<div class="vsep2" style="left:529.5px;top:183px;height:16px"></div>
<div class="vsep2" style="left:562.5px;top:183px;height:16px"></div>
<div class="vsep2" style="left:595.0px;top:183px;height:16px"></div>
<div class="vsep2" style="left:614.2px;top:183px;height:16px"></div>
<div class="vsep2" style="left:640.0px;top:183px;height:16px"></div>
<div class="vsep2" style="left:660.7px;top:183px;height:16px"></div>
<span class="t" style="left:354.39px;top:185.30px;color:#3e3e3e">Time</span>
<span class="t" style="left:417.87px;top:185.30px;color:#3e3e3e">Az</span>
<span class="t" style="left:450.09px;top:185.30px;color:#3e3e3e">El</span>
<span class="t" style="left:471.43px;top:185.30px;color:#3e3e3e">Range</span>
<span class="t" style="left:509.18px;top:185.30px;color:#3e3e3e">Lat</span>
<span class="t" style="left:539.66px;top:185.30px;color:#3e3e3e">Lon</span>
<span class="t" style="left:567.95px;top:185.30px;color:#3e3e3e">Footp</span>
<span class="t" style="left:600.17px;top:185.30px;color:#3e3e3e">Alt</span>
<span class="t" style="left:622.18px;top:185.30px;color:#3e3e3e">Vel</span>
<span class="t" style="left:644.70px;top:185.30px;color:#3e3e3e">Del</span>
<span class="t" style="left:665.77px;top:185.30px;color:#3e3e3e">Vis</span>
<div id="pw_sel"></div>
<span class="t" style="letter-spacing:-0.008px;left:324.80px;top:201.00px;color:#1e1e1e">2020/07/06 12:48:53</span>
<span class="t" style="letter-spacing:-0.290px;left:412.80px;top:201.00px;color:#1e1e1e">73.52°</span>
<span class="t" style="letter-spacing:-0.269px;left:446.80px;top:201.00px;color:#1e1e1e">0.00°</span>
<span class="t" style="letter-spacing:-0.350px;left:480.82px;top:201.00px;color:#1e1e1e">2791</span>
<span class="t" style="letter-spacing:-0.290px;left:502.90px;top:201.00px;color:#1e1e1e">40.21°</span>
<span class="t" style="letter-spacing:-0.096px;left:536.60px;top:201.00px;color:#1e1e1e">-3.05°</span>
<span class="t" style="letter-spacing:-0.350px;left:575.92px;top:201.00px;color:#1e1e1e">4987</span>
<span class="t" style="letter-spacing:-0.294px;left:599.50px;top:201.00px;color:#1e1e1e">521</span>
<span class="t" style="letter-spacing:-0.144px;left:617.80px;top:201.00px;color:#1e1e1e">7.676</span>
<span class="t" style="letter-spacing:-0.082px;left:642.80px;top:201.00px;color:#1e1e1e">8.77</span>
<span class="t" style="left:668.82px;top:201.00px;color:#1e1e1e">D</span>
<span class="t" style="letter-spacing:-0.008px;left:324.80px;top:214.85px;color:#1e1e1e">2020/07/06 12:49:29</span>
<span class="t" style="letter-spacing:-0.290px;left:412.80px;top:214.85px;color:#1e1e1e">68.52°</span>
<span class="t" style="letter-spacing:-0.269px;left:446.80px;top:214.85px;color:#1e1e1e">4.36°</span>
<span class="t" style="letter-spacing:-0.350px;left:480.82px;top:214.85px;color:#1e1e1e">2433</span>
<span class="t" style="letter-spacing:-0.290px;left:502.90px;top:214.85px;color:#1e1e1e">42.38°</span>
<span class="t" style="letter-spacing:-0.096px;left:536.60px;top:214.85px;color:#1e1e1e">-2.40°</span>
<span class="t" style="letter-spacing:-0.350px;left:575.92px;top:214.85px;color:#1e1e1e">4986</span>
<span class="t" style="letter-spacing:-0.294px;left:599.50px;top:214.85px;color:#1e1e1e">520</span>
<span class="t" style="letter-spacing:-0.144px;left:617.80px;top:214.85px;color:#1e1e1e">7.677</span>
<span class="t" style="letter-spacing:-0.082px;left:642.80px;top:214.85px;color:#1e1e1e">7.96</span>
<span class="t" style="left:668.82px;top:214.85px;color:#1e1e1e">D</span>
<span class="t" style="letter-spacing:-0.008px;left:324.80px;top:228.70px;color:#1e1e1e">2020/07/06 12:50:06</span>
<span class="t" style="letter-spacing:-0.290px;left:412.80px;top:228.70px;color:#1e1e1e">61.92°</span>
<span class="t" style="letter-spacing:-0.269px;left:446.80px;top:228.70px;color:#1e1e1e">9.59°</span>
<span class="t" style="letter-spacing:-0.350px;left:480.82px;top:228.70px;color:#1e1e1e">2080</span>
<span class="t" style="letter-spacing:-0.290px;left:502.90px;top:228.70px;color:#1e1e1e">44.55°</span>
<span class="t" style="letter-spacing:-0.096px;left:536.60px;top:228.70px;color:#1e1e1e">-1.70°</span>
<span class="t" style="letter-spacing:-0.350px;left:575.92px;top:228.70px;color:#1e1e1e">4984</span>
<span class="t" style="letter-spacing:-0.294px;left:599.50px;top:228.70px;color:#1e1e1e">520</span>
<span class="t" style="letter-spacing:-0.144px;left:617.80px;top:228.70px;color:#1e1e1e">7.678</span>
<span class="t" style="letter-spacing:-0.082px;left:642.80px;top:228.70px;color:#1e1e1e">7.14</span>
<span class="t" style="left:668.82px;top:228.70px;color:#1e1e1e">D</span>
<span class="t" style="letter-spacing:-0.008px;left:324.80px;top:242.55px;color:#1e1e1e">2020/07/06 12:50:42</span>
<span class="t" style="letter-spacing:-0.290px;left:412.80px;top:242.55px;color:#1e1e1e">52.62°</span>
<span class="t" style="letter-spacing:-0.290px;left:442.30px;top:242.55px;color:#1e1e1e">15.93°</span>
<span class="t" style="letter-spacing:-0.350px;left:480.82px;top:242.55px;color:#1e1e1e">1739</span>
<span class="t" style="letter-spacing:-0.290px;left:502.90px;top:242.55px;color:#1e1e1e">46.71°</span>
<span class="t" style="letter-spacing:-0.096px;left:536.60px;top:242.55px;color:#1e1e1e">-0.95°</span>
<span class="t" style="letter-spacing:-0.350px;left:575.92px;top:242.55px;color:#1e1e1e">4983</span>
<span class="t" style="letter-spacing:-0.294px;left:599.50px;top:242.55px;color:#1e1e1e">519</span>
<span class="t" style="letter-spacing:-0.144px;left:617.80px;top:242.55px;color:#1e1e1e">7.678</span>
<span class="t" style="letter-spacing:-0.082px;left:642.80px;top:242.55px;color:#1e1e1e">6.34</span>
<span class="t" style="left:668.82px;top:242.55px;color:#1e1e1e">D</span>
<span class="t" style="letter-spacing:-0.008px;left:324.80px;top:256.40px;color:#f3e9df">2020/07/06 12:51:19</span>
<span class="t" style="letter-spacing:-0.290px;left:412.80px;top:256.40px;color:#f3e9df">38.76°</span>
<span class="t" style="letter-spacing:-0.290px;left:442.30px;top:256.40px;color:#f3e9df">23.45°</span>
<span class="t" style="letter-spacing:-0.350px;left:480.82px;top:256.40px;color:#f3e9df">1420</span>
<span class="t" style="letter-spacing:-0.290px;left:502.90px;top:256.40px;color:#f3e9df">48.86°</span>
<span class="t" style="letter-spacing:-0.096px;left:536.60px;top:256.40px;color:#f3e9df">-0.14°</span>
<span class="t" style="letter-spacing:-0.350px;left:575.92px;top:256.40px;color:#f3e9df">4983</span>
<span class="t" style="letter-spacing:-0.294px;left:599.50px;top:256.40px;color:#f3e9df">519</span>
<span class="t" style="letter-spacing:-0.144px;left:617.80px;top:256.40px;color:#f3e9df">7.679</span>
<span class="t" style="letter-spacing:-0.082px;left:642.80px;top:256.40px;color:#f3e9df">5.55</span>
<span class="t" style="left:668.82px;top:256.40px;color:#f3e9df">D</span>
<span class="t" style="letter-spacing:-0.008px;left:324.80px;top:270.25px;color:#1e1e1e">2020/07/06 12:51:55</span>
<span class="t" style="letter-spacing:-0.290px;left:412.80px;top:270.25px;color:#1e1e1e">17.51°</span>
<span class="t" style="letter-spacing:-0.290px;left:442.30px;top:270.25px;color:#1e1e1e">31.44°</span>
<span class="t" style="letter-spacing:-0.231px;left:481.00px;top:270.25px;color:#1e1e1e">1144</span>
<span class="t" style="letter-spacing:-0.290px;left:502.90px;top:270.25px;color:#1e1e1e">51.01°</span>
<span class="t" style="letter-spacing:-0.269px;left:540.30px;top:270.25px;color:#1e1e1e">0.75°</span>
<span class="t" style="letter-spacing:-0.350px;left:575.92px;top:270.25px;color:#1e1e1e">4984</span>
<span class="t" style="letter-spacing:-0.294px;left:599.50px;top:270.25px;color:#1e1e1e">520</span>
<span class="t" style="letter-spacing:-0.144px;left:617.80px;top:270.25px;color:#1e1e1e">7.679</span>
<span class="t" style="letter-spacing:-0.082px;left:642.80px;top:270.25px;color:#1e1e1e">4.78</span>
<span class="t" style="left:668.82px;top:270.25px;color:#1e1e1e">D</span>
<span class="t" style="letter-spacing:-0.008px;left:324.80px;top:284.10px;color:#1e1e1e">2020/07/06 12:52:31</span>
<span class="t" style="letter-spacing:-0.305px;left:408.30px;top:284.10px;color:#1e1e1e">347.83°</span>
<span class="t" style="letter-spacing:-0.290px;left:442.30px;top:284.10px;color:#1e1e1e">37.84°</span>
<span class="t" style="letter-spacing:-0.350px;left:485.37px;top:284.10px;color:#1e1e1e">944</span>
<span class="t" style="letter-spacing:-0.290px;left:502.90px;top:284.10px;color:#1e1e1e">53.14°</span>
<span class="t" style="letter-spacing:-0.269px;left:540.30px;top:284.10px;color:#1e1e1e">1.73°</span>
<span class="t" style="letter-spacing:-0.350px;left:575.92px;top:284.10px;color:#1e1e1e">4986</span>
<span class="t" style="letter-spacing:-0.294px;left:599.50px;top:284.10px;color:#1e1e1e">520</span>
<span class="t" style="letter-spacing:-0.144px;left:617.80px;top:284.10px;color:#1e1e1e">7.679</span>
<span class="t" style="letter-spacing:-0.082px;left:642.80px;top:284.10px;color:#1e1e1e">4.04</span>
<span class="t" style="left:668.82px;top:284.10px;color:#1e1e1e">D</span>
<span class="t" style="letter-spacing:-0.008px;left:324.80px;top:297.95px;color:#1e1e1e">2020/07/06 12:53:08</span>
<span class="t" style="letter-spacing:-0.305px;left:408.30px;top:297.95px;color:#1e1e1e">317.72°</span>
<span class="t" style="letter-spacing:-0.290px;left:442.30px;top:297.95px;color:#1e1e1e">40.21°</span>
<span class="t" style="letter-spacing:-0.350px;left:485.37px;top:297.95px;color:#1e1e1e">860</span>
<span class="t" style="letter-spacing:-0.290px;left:502.90px;top:297.95px;color:#1e1e1e">55.26°</span>
<span class="t" style="letter-spacing:-0.269px;left:540.30px;top:297.95px;color:#1e1e1e">2.82°</span>
<span class="t" style="letter-spacing:-0.350px;left:575.92px;top:297.95px;color:#1e1e1e">4988</span>
<span class="t" style="letter-spacing:-0.294px;left:599.50px;top:297.95px;color:#1e1e1e">520</span>
<span class="t" style="letter-spacing:-0.144px;left:617.80px;top:297.95px;color:#1e1e1e">7.679</span>
<span class="t" style="letter-spacing:-0.082px;left:642.80px;top:297.95px;color:#1e1e1e">3.36</span>
<span class="t" style="left:668.82px;top:297.95px;color:#1e1e1e">D</span>
<span class="t" style="letter-spacing:-0.008px;left:324.80px;top:311.80px;color:#1e1e1e">2020/07/06 12:53:44</span>
<span class="t" style="letter-spacing:-0.305px;left:408.30px;top:311.80px;color:#1e1e1e">298.93°</span>
<span class="t" style="letter-spacing:-0.290px;left:442.30px;top:311.80px;color:#1e1e1e">44.49°</span>
<span class="t" style="letter-spacing:-0.350px;left:485.37px;top:311.80px;color:#1e1e1e">718</span>
<span class="t" style="letter-spacing:-0.290px;left:502.90px;top:311.80px;color:#1e1e1e">57.36°</span>
<span class="t" style="letter-spacing:-0.269px;left:540.30px;top:311.80px;color:#1e1e1e">3.44°</span>
<span class="t" style="letter-spacing:-0.350px;left:575.92px;top:311.80px;color:#1e1e1e">4990</span>
<span class="t" style="letter-spacing:-0.294px;left:599.50px;top:311.80px;color:#1e1e1e">521</span>
<span class="t" style="letter-spacing:-0.144px;left:617.80px;top:311.80px;color:#1e1e1e">7.679</span>
<span class="t" style="letter-spacing:-0.082px;left:642.80px;top:311.80px;color:#1e1e1e">2.79</span>
<span class="t" style="left:668.82px;top:311.80px;color:#1e1e1e">D</span>
<span class="t" style="letter-spacing:-0.008px;left:324.80px;top:325.65px;color:#1e1e1e">2020/07/06 12:54:19</span>
<span class="t" style="letter-spacing:-0.305px;left:408.30px;top:325.65px;color:#1e1e1e">298.93°</span>
<span class="t" style="letter-spacing:-0.290px;left:442.30px;top:325.65px;color:#1e1e1e">44.49°</span>
<span class="t" style="letter-spacing:-0.350px;left:485.37px;top:325.65px;color:#1e1e1e">718</span>
<span class="t" style="letter-spacing:-0.290px;left:502.90px;top:325.65px;color:#1e1e1e">57.36°</span>
<span class="t" style="letter-spacing:-0.269px;left:540.30px;top:325.65px;color:#1e1e1e">3.44°</span>
<span class="t" style="letter-spacing:-0.350px;left:575.92px;top:325.65px;color:#1e1e1e">4993</span>
<span class="t" style="letter-spacing:-0.294px;left:599.50px;top:325.65px;color:#1e1e1e">522</span>
<span class="t" style="letter-spacing:-0.144px;left:617.80px;top:325.65px;color:#1e1e1e">7.678</span>
<span class="t" style="letter-spacing:-0.082px;left:642.80px;top:325.65px;color:#1e1e1e">2.39</span>
<span class="t" style="left:668.82px;top:325.65px;color:#1e1e1e">D</span>
<span class="t" style="letter-spacing:-0.008px;left:324.80px;top:339.50px;color:#1e1e1e">2020/07/06 12:54:55</span>
<span class="t" style="letter-spacing:-0.305px;left:408.30px;top:339.50px;color:#1e1e1e">330.71°</span>
<span class="t" style="letter-spacing:-0.290px;left:442.30px;top:339.50px;color:#1e1e1e">48.13°</span>
<span class="t" style="letter-spacing:-0.350px;left:485.37px;top:339.50px;color:#1e1e1e">682</span>
<span class="t" style="letter-spacing:-0.290px;left:502.90px;top:339.50px;color:#1e1e1e">58.73°</span>
<span class="t" style="letter-spacing:-0.269px;left:540.30px;top:339.50px;color:#1e1e1e">6.78°</span>
<span class="t" style="letter-spacing:-0.350px;left:575.92px;top:339.50px;color:#1e1e1e">4998</span>
<span class="t" style="letter-spacing:-0.294px;left:599.50px;top:339.50px;color:#1e1e1e">523</span>
<span class="t" style="letter-spacing:-0.144px;left:617.80px;top:339.50px;color:#1e1e1e">7.677</span>
<span class="t" style="letter-spacing:-0.082px;left:642.80px;top:339.50px;color:#1e1e1e">2.28</span>
<span class="t" style="left:668.82px;top:339.50px;color:#1e1e1e">D</span>
<span class="t" style="letter-spacing:-0.008px;left:324.80px;top:353.35px;color:#1e1e1e">2020/07/06 12:55:32</span>
<span class="t" style="letter-spacing:-0.269px;left:417.30px;top:353.35px;color:#1e1e1e">0.38°</span>
<span class="t" style="letter-spacing:-0.290px;left:442.30px;top:353.35px;color:#1e1e1e">42.70°</span>
<span class="t" style="letter-spacing:-0.350px;left:485.37px;top:353.35px;color:#1e1e1e">741</span>
<span class="t" style="letter-spacing:-0.290px;left:502.90px;top:353.35px;color:#1e1e1e">60.01°</span>
<span class="t" style="letter-spacing:-0.290px;left:535.80px;top:353.35px;color:#1e1e1e">10.39°</span>
<span class="t" style="letter-spacing:-0.350px;left:575.92px;top:353.35px;color:#1e1e1e">5003</span>
<span class="t" style="letter-spacing:-0.294px;left:599.50px;top:353.35px;color:#1e1e1e">524</span>
<span class="t" style="letter-spacing:-0.144px;left:617.80px;top:353.35px;color:#1e1e1e">7.676</span>
<span class="t" style="letter-spacing:-0.082px;left:642.80px;top:353.35px;color:#1e1e1e">2.47</span>
<span class="t" style="left:668.82px;top:353.35px;color:#1e1e1e">D</span>
<div id="qs_red"></div>
<div class="pbtn" style="left:465.5px;top:369.2px;width:48.3px;height:13.3px"></div>
<span class="t" style="letter-spacing:-0.213px;left:471.55px;top:369.80px;color:#2c2c2c">QuadSAT</span>
<div class="pbtn" style="left:519.6px;top:368.2px;width:48.9px;height:14.6px"></div>
<span class="t" style="left:535.50px;top:369.80px;color:#2c2c2c">Print</span>
<div class="pbtn" style="left:574.6px;top:368.2px;width:47.7px;height:14.6px"></div>
<span class="t" style="left:588.92px;top:369.80px;color:#2c2c2c">Save</span>
<div class="pbtn" style="left:629.0px;top:368.2px;width:48.7px;height:14.6px"></div>
<span class="t" style="left:642.60px;top:369.80px;color:#2c2c2c">Close</span>
<div id="sd_red"></div>
<div id="sd_title"></div>
<span class="t" style="letter-spacing:-0.012px;left:441.50px;top:208.30px;font-weight:bold;color:#dfdbd2">QuadSAT - Save Pass Details</span>
<div class="closebtn" style="left:590.2px;top:209.5px;width:9.6px;height:9.6px"></div>
<div id="sd_body"></div>
<span class="t" style="letter-spacing:0.003px;left:408.50px;top:234.50px;color:#3c3c3c">Save in folder:</span>
<span class="t" style="letter-spacing:-0.111px;left:408.50px;top:259.00px;color:#3c3c3c">Save using file name:</span>
<span class="t" style="letter-spacing:0.105px;left:408.50px;top:284.00px;color:#3c3c3c">File contents:</span>
<div class="combo" style="left:497.3px;top:231.2px;width:98.3px;height:17.9px"></div>
<svg class="abs" style="left:499px;top:235px" width="13" height="11" viewBox="499 235 13 11"><rect x="500.1" y="236.1" width="10" height="8.4" rx="0.9" fill="#b300aa"/><rect x="500.1" y="236.1" width="10" height="2.3" rx="0.8" fill="#8b9a70"/><rect x="500.1" y="243.3" width="10" height="1.2" fill="#8a0088"/><rect x="501.2" y="239.3" width="1.1" height="0.9" fill="#f0c8ec"/><rect x="501.2" y="241.3" width="1.1" height="0.9" fill="#f0c8ec"/><rect x="505.4" y="239.6" width="2.6" height="2.4" fill="#df6ed6"/></svg>
<span class="t" style="letter-spacing:0.102px;left:514.00px;top:234.50px;color:#3c3c3c">Desktop</span>
<svg class="abs" style="left:0;top:0" width="1024" height="521" viewBox="0 0 1024 521"><polygon points="584.80,239.05 590.80,239.05 587.80,242.35" fill="#1c1c1c"/></svg>
<div class="entry" style="left:497.3px;top:256.5px;width:98.3px;height:15.9px"></div>
<span class="t" style="letter-spacing:-0.231px;left:501.80px;top:258.90px;color:#3c3c3c">AO-85-16461</span>
<div class="combo foc" style="left:497.3px;top:280.5px;width:98.3px;height:17.9px"></div>
<span class="t" style="letter-spacing:0.157px;left:501.80px;top:283.90px;color:#3c3c3c">Info+header+data</span>
<svg class="abs" style="left:0;top:0" width="1024" height="521" viewBox="0 0 1024 521"><polygon points="584.80,288.45 590.80,288.45 587.80,291.75" fill="#1c1c1c"/></svg>
<div class="sbtn" style="left:494.4px;top:309.5px;width:49.4px;height:15.6px"></div>
<span class="t" style="left:505.40px;top:311.70px;color:#3c3c3c">Cancel</span>
<div class="sbtn" style="left:549.2px;top:309.5px;width:49.2px;height:15.6px"></div>
<span class="t" style="left:563.77px;top:311.70px;color:#3c3c3c">Save</span>
</body></html>
